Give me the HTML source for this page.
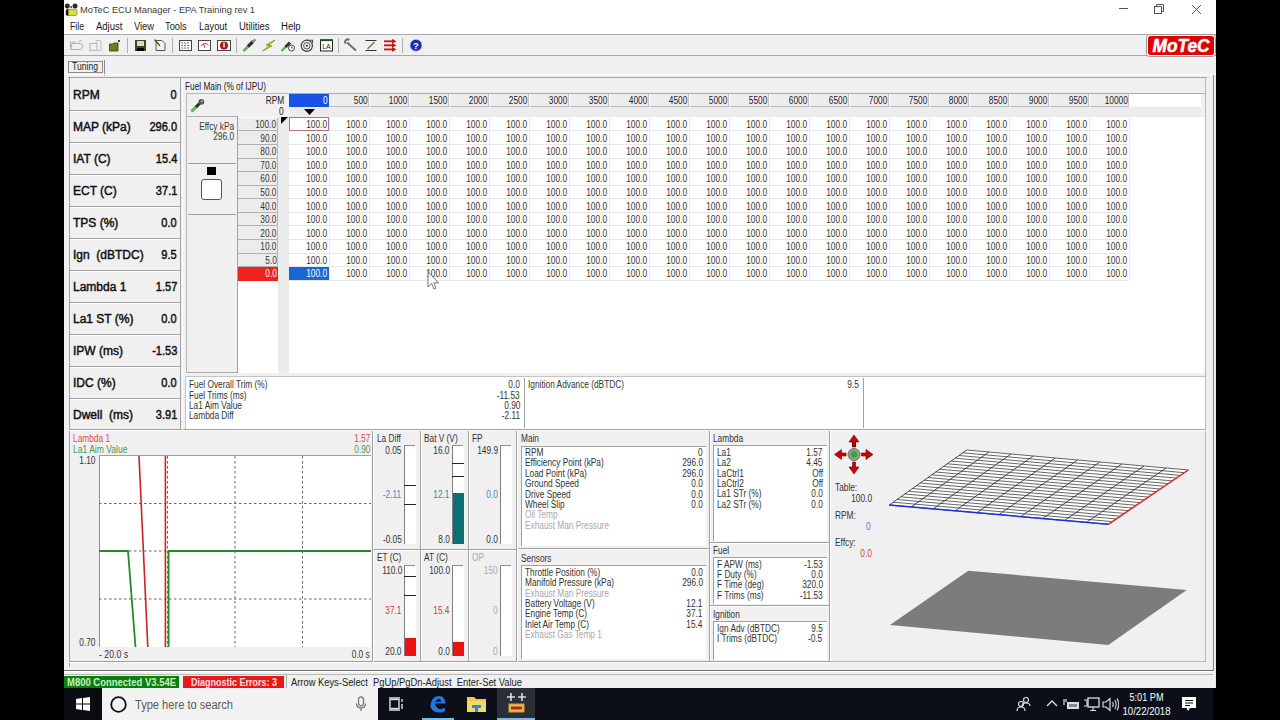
<!DOCTYPE html><html><head><meta charset="utf-8"><style>
html,body{margin:0;padding:0;}
body{width:1280px;height:720px;background:#000;position:relative;overflow:hidden;font-family:"Liberation Sans",sans-serif;}
body>div,body>svg{position:absolute;}
</style></head><body>
<div style="left:64px;top:0px;width:1152px;height:688px;background:#f0f0f0"></div>
<div style="left:64px;top:0px;width:1152px;height:34px;background:#fff"></div>
<div style="left:80.00px;top:3.25px;font-size:9.5px;line-height:13.299999999999999px;color:#3a3a3a;transform:scaleX(0.9758);transform-origin:left center;white-space:pre;">MoTeC ECU Manager - EPA Training rev 1</div>
<svg style="left:64px;top:2px" width="15" height="15" viewBox="64 2 15 15">
<circle cx="67.3" cy="6" r="2.5" fill="#2a2a2a"/><circle cx="75" cy="6" r="2.5" fill="#2a2a2a"/><circle cx="71.2" cy="7" r="0.9" fill="#333"/>
<rect x="66" y="9.3" width="11" height="6.2" rx="1.6" fill="#d8e040" stroke="#6a6a20" stroke-width="0.6"/><path d="M67.6 9.3H68.4V15.5H67.6A1.6 1.6 0 0 1 66 13.9V10.9A1.6 1.6 0 0 1 67.6 9.3Z" fill="#111"/></svg>
<div style="left:1119px;top:8px;width:9px;height:1px;background:#555"></div>
<svg style="left:1154px;top:4px" width="11" height="11" viewBox="0 0 11 11"><rect x="0.5" y="2.5" width="7" height="7" fill="none" stroke="#555"/><path d="M2.5 2.5V0.5H9.5V7.5H7.5" fill="none" stroke="#555"/></svg>
<svg style="left:1191px;top:4px" width="11" height="11" viewBox="0 0 11 11"><path d="M1 1L10 10M10 1L1 10" stroke="#555" stroke-width="1"/></svg>
<div style="left:70.00px;top:20.20px;font-size:10px;line-height:14.0px;color:#1a1a1a;transform:scaleX(0.8689);transform-origin:left center;white-space:pre;">File</div>
<div style="left:95.60px;top:20.20px;font-size:10px;line-height:14.0px;color:#1a1a1a;transform:scaleX(0.9499);transform-origin:left center;white-space:pre;">Adjust</div>
<div style="left:133.60px;top:20.20px;font-size:10px;line-height:14.0px;color:#1a1a1a;transform:scaleX(0.9305);transform-origin:left center;white-space:pre;">View</div>
<div style="left:165.30px;top:20.20px;font-size:10px;line-height:14.0px;color:#1a1a1a;transform:scaleX(0.9296);transform-origin:left center;white-space:pre;">Tools</div>
<div style="left:198.80px;top:20.20px;font-size:10px;line-height:14.0px;color:#1a1a1a;transform:scaleX(0.9393);transform-origin:left center;white-space:pre;">Layout</div>
<div style="left:238.50px;top:20.20px;font-size:10px;line-height:14.0px;color:#1a1a1a;transform:scaleX(0.9464);transform-origin:left center;white-space:pre;">Utilities</div>
<div style="left:281.00px;top:20.20px;font-size:10px;line-height:14.0px;color:#1a1a1a;transform:scaleX(0.9579);transform-origin:left center;white-space:pre;">Help</div>
<div style="left:64px;top:34px;width:1152px;height:1px;background:#a8a8a8"></div>
<div style="left:64px;top:55px;width:1152px;height:1px;background:#a8a8a8"></div>
<div style="left:64px;top:56px;width:1152px;height:632px;background:#f0f0f0"></div>
<div style="left:68px;top:61px;width:35px;height:12px;border:1px solid #8a8a8a;background:#f0f0f0;box-sizing:border-box"></div>
<div style="left:72.40px;top:60.00px;font-size:10px;line-height:14.0px;color:#222;transform:scaleX(0.8608);transform-origin:left center;white-space:pre;">Tuning</div>
<div style="left:104px;top:60px;width:1px;height:16px;background:#8a8a8a"></div>
<div style="left:64px;top:74px;width:1152px;height:1px;background:#ffffff"></div>
<div style="left:68px;top:77px;width:1139px;height:1px;background:#a0a0a0"></div>
<div style="left:1213px;top:75px;width:1px;height:596px;background:#8a8a8a"></div>
<div style="left:1215px;top:75px;width:1px;height:613px;background:#e8e8e8"></div>
<div style="left:1205px;top:77px;width:1px;height:353px;background:#b8b8b8"></div>
<div style="left:69px;top:78px;width:1px;height:352px;background:#a0a0a0"></div>
<div style="left:180px;top:78px;width:1px;height:352px;background:#a0a0a0"></div>
<div style="left:73.00px;top:87.10px;font-size:12px;line-height:16.799999999999997px;color:#111;white-space:pre;-webkit-text-stroke:0.45px #111">RPM</div>
<div style="left:170.33px;top:87.10px;font-size:12px;line-height:16.799999999999997px;color:#111;transform:scaleX(0.9200);transform-origin:right center;white-space:pre;-webkit-text-stroke:0.45px #111">0</div>
<div style="left:70px;top:110px;width:110px;height:1px;background:#a0a0a0"></div>
<div style="left:70px;top:111px;width:110px;height:1px;background:#ffffff"></div>
<div style="left:73.00px;top:119.10px;font-size:12px;line-height:16.799999999999997px;color:#111;white-space:pre;-webkit-text-stroke:0.45px #111">MAP (kPa)</div>
<div style="left:146.97px;top:119.10px;font-size:12px;line-height:16.799999999999997px;color:#111;transform:scaleX(0.9200);transform-origin:right center;white-space:pre;-webkit-text-stroke:0.45px #111">296.0</div>
<div style="left:70px;top:142px;width:110px;height:1px;background:#a0a0a0"></div>
<div style="left:70px;top:143px;width:110px;height:1px;background:#ffffff"></div>
<div style="left:73.00px;top:151.10px;font-size:12px;line-height:16.799999999999997px;color:#111;white-space:pre;-webkit-text-stroke:0.45px #111">IAT (C)</div>
<div style="left:153.65px;top:151.10px;font-size:12px;line-height:16.799999999999997px;color:#111;transform:scaleX(0.9200);transform-origin:right center;white-space:pre;-webkit-text-stroke:0.45px #111">15.4</div>
<div style="left:70px;top:174px;width:110px;height:1px;background:#a0a0a0"></div>
<div style="left:70px;top:175px;width:110px;height:1px;background:#ffffff"></div>
<div style="left:73.00px;top:183.10px;font-size:12px;line-height:16.799999999999997px;color:#111;white-space:pre;-webkit-text-stroke:0.45px #111">ECT (C)</div>
<div style="left:153.65px;top:183.10px;font-size:12px;line-height:16.799999999999997px;color:#111;transform:scaleX(0.9200);transform-origin:right center;white-space:pre;-webkit-text-stroke:0.45px #111">37.1</div>
<div style="left:70px;top:206px;width:110px;height:1px;background:#a0a0a0"></div>
<div style="left:70px;top:207px;width:110px;height:1px;background:#ffffff"></div>
<div style="left:73.00px;top:215.10px;font-size:12px;line-height:16.799999999999997px;color:#111;white-space:pre;-webkit-text-stroke:0.45px #111">TPS (%)</div>
<div style="left:160.32px;top:215.10px;font-size:12px;line-height:16.799999999999997px;color:#111;transform:scaleX(0.9200);transform-origin:right center;white-space:pre;-webkit-text-stroke:0.45px #111">0.0</div>
<div style="left:70px;top:238px;width:110px;height:1px;background:#a0a0a0"></div>
<div style="left:70px;top:239px;width:110px;height:1px;background:#ffffff"></div>
<div style="left:73.00px;top:247.10px;font-size:12px;line-height:16.799999999999997px;color:#111;white-space:pre;-webkit-text-stroke:0.45px #111">Ign  (dBTDC)</div>
<div style="left:160.32px;top:247.10px;font-size:12px;line-height:16.799999999999997px;color:#111;transform:scaleX(0.9200);transform-origin:right center;white-space:pre;-webkit-text-stroke:0.45px #111">9.5</div>
<div style="left:70px;top:270px;width:110px;height:1px;background:#a0a0a0"></div>
<div style="left:70px;top:271px;width:110px;height:1px;background:#ffffff"></div>
<div style="left:73.00px;top:279.10px;font-size:12px;line-height:16.799999999999997px;color:#111;white-space:pre;-webkit-text-stroke:0.45px #111">Lambda 1</div>
<div style="left:153.65px;top:279.10px;font-size:12px;line-height:16.799999999999997px;color:#111;transform:scaleX(0.9200);transform-origin:right center;white-space:pre;-webkit-text-stroke:0.45px #111">1.57</div>
<div style="left:70px;top:302px;width:110px;height:1px;background:#a0a0a0"></div>
<div style="left:70px;top:303px;width:110px;height:1px;background:#ffffff"></div>
<div style="left:73.00px;top:311.10px;font-size:12px;line-height:16.799999999999997px;color:#111;white-space:pre;-webkit-text-stroke:0.45px #111">La1 ST (%)</div>
<div style="left:160.32px;top:311.10px;font-size:12px;line-height:16.799999999999997px;color:#111;transform:scaleX(0.9200);transform-origin:right center;white-space:pre;-webkit-text-stroke:0.45px #111">0.0</div>
<div style="left:70px;top:334px;width:110px;height:1px;background:#a0a0a0"></div>
<div style="left:70px;top:335px;width:110px;height:1px;background:#ffffff"></div>
<div style="left:73.00px;top:343.10px;font-size:12px;line-height:16.799999999999997px;color:#111;white-space:pre;-webkit-text-stroke:0.45px #111">IPW (ms)</div>
<div style="left:149.65px;top:343.10px;font-size:12px;line-height:16.799999999999997px;color:#111;transform:scaleX(0.9200);transform-origin:right center;white-space:pre;-webkit-text-stroke:0.45px #111">-1.53</div>
<div style="left:70px;top:366px;width:110px;height:1px;background:#a0a0a0"></div>
<div style="left:70px;top:367px;width:110px;height:1px;background:#ffffff"></div>
<div style="left:73.00px;top:375.10px;font-size:12px;line-height:16.799999999999997px;color:#111;white-space:pre;-webkit-text-stroke:0.45px #111">IDC (%)</div>
<div style="left:160.32px;top:375.10px;font-size:12px;line-height:16.799999999999997px;color:#111;transform:scaleX(0.9200);transform-origin:right center;white-space:pre;-webkit-text-stroke:0.45px #111">0.0</div>
<div style="left:70px;top:398px;width:110px;height:1px;background:#a0a0a0"></div>
<div style="left:70px;top:399px;width:110px;height:1px;background:#ffffff"></div>
<div style="left:73.00px;top:407.10px;font-size:12px;line-height:16.799999999999997px;color:#111;white-space:pre;-webkit-text-stroke:0.45px #111">Dwell  (ms)</div>
<div style="left:153.65px;top:407.10px;font-size:12px;line-height:16.799999999999997px;color:#111;transform:scaleX(0.9200);transform-origin:right center;white-space:pre;-webkit-text-stroke:0.45px #111">3.91</div>
<div style="left:69px;top:429px;width:1136px;height:1px;background:#a0a0a0"></div>
<div style="left:69px;top:430px;width:1136px;height:1px;background:#ffffff"></div>
<div style="left:182px;top:78px;width:1px;height:352px;background:#ffffff"></div>
<div style="left:185.00px;top:80.00px;font-size:10px;line-height:14.0px;color:#222;transform:scaleX(0.8282);transform-origin:left center;white-space:pre;">Fuel Main (% of IJPU)</div>
<div style="left:186px;top:93px;width:1px;height:280px;background:#b8b8b8"></div>
<div style="left:186px;top:93px;width:1019px;height:1px;background:#b8b8b8"></div>
<div style="left:187px;top:94px;width:102px;height:23px;background:#f0f0f0"></div>
<div style="left:261.78px;top:94.00px;font-size:10px;line-height:14.0px;color:#222;transform:scaleX(0.8300);transform-origin:right center;white-space:pre;">RPM</div>
<div style="left:278.44px;top:105.00px;font-size:10px;line-height:14.0px;color:#222;transform:scaleX(0.8300);transform-origin:right center;white-space:pre;">0</div>
<svg style="left:190px;top:97px" width="16" height="16" viewBox="0 0 16 16"><path d="M2.5 13.5L6.5 9.5" stroke="#6ab86a" stroke-width="3.4" stroke-linecap="round"/><path d="M6 10L9.5 6.5" stroke="#2a2a2a" stroke-width="3"/><circle cx="11.3" cy="4.8" r="2.9" fill="#555"/><circle cx="11.8" cy="4.2" r="1.2" fill="#999"/></svg>
<div style="left:1129px;top:93px;width:72px;height:14px;background:#fff"></div>
<div style="left:289px;top:93px;width:40px;height:14px;background:#1a4fe8"></div>
<div style="left:321.94px;top:94.20px;font-size:10px;line-height:14.0px;color:#fff;transform:scaleX(0.8300);transform-origin:right center;white-space:pre;">0</div>
<div style="left:329px;top:93px;width:40px;height:14px;background:#ededed;border-right:1px solid #c4c4c4;border-bottom:1px solid #bcbcbc;border-left:1px solid #fafafa;box-sizing:border-box"></div>
<div style="left:350.82px;top:94.20px;font-size:10px;line-height:14.0px;color:#222;transform:scaleX(0.8300);transform-origin:right center;white-space:pre;">500</div>
<div style="left:369px;top:93px;width:40px;height:14px;background:#ededed;border-right:1px solid #c4c4c4;border-bottom:1px solid #bcbcbc;border-left:1px solid #fafafa;box-sizing:border-box"></div>
<div style="left:385.26px;top:94.20px;font-size:10px;line-height:14.0px;color:#222;transform:scaleX(0.8300);transform-origin:right center;white-space:pre;">1000</div>
<div style="left:409px;top:93px;width:40px;height:14px;background:#ededed;border-right:1px solid #c4c4c4;border-bottom:1px solid #bcbcbc;border-left:1px solid #fafafa;box-sizing:border-box"></div>
<div style="left:425.26px;top:94.20px;font-size:10px;line-height:14.0px;color:#222;transform:scaleX(0.8300);transform-origin:right center;white-space:pre;">1500</div>
<div style="left:449px;top:93px;width:40px;height:14px;background:#ededed;border-right:1px solid #c4c4c4;border-bottom:1px solid #bcbcbc;border-left:1px solid #fafafa;box-sizing:border-box"></div>
<div style="left:465.26px;top:94.20px;font-size:10px;line-height:14.0px;color:#222;transform:scaleX(0.8300);transform-origin:right center;white-space:pre;">2000</div>
<div style="left:489px;top:93px;width:40px;height:14px;background:#ededed;border-right:1px solid #c4c4c4;border-bottom:1px solid #bcbcbc;border-left:1px solid #fafafa;box-sizing:border-box"></div>
<div style="left:505.26px;top:94.20px;font-size:10px;line-height:14.0px;color:#222;transform:scaleX(0.8300);transform-origin:right center;white-space:pre;">2500</div>
<div style="left:529px;top:93px;width:40px;height:14px;background:#ededed;border-right:1px solid #c4c4c4;border-bottom:1px solid #bcbcbc;border-left:1px solid #fafafa;box-sizing:border-box"></div>
<div style="left:545.26px;top:94.20px;font-size:10px;line-height:14.0px;color:#222;transform:scaleX(0.8300);transform-origin:right center;white-space:pre;">3000</div>
<div style="left:569px;top:93px;width:40px;height:14px;background:#ededed;border-right:1px solid #c4c4c4;border-bottom:1px solid #bcbcbc;border-left:1px solid #fafafa;box-sizing:border-box"></div>
<div style="left:585.26px;top:94.20px;font-size:10px;line-height:14.0px;color:#222;transform:scaleX(0.8300);transform-origin:right center;white-space:pre;">3500</div>
<div style="left:609px;top:93px;width:40px;height:14px;background:#ededed;border-right:1px solid #c4c4c4;border-bottom:1px solid #bcbcbc;border-left:1px solid #fafafa;box-sizing:border-box"></div>
<div style="left:625.26px;top:94.20px;font-size:10px;line-height:14.0px;color:#222;transform:scaleX(0.8300);transform-origin:right center;white-space:pre;">4000</div>
<div style="left:649px;top:93px;width:40px;height:14px;background:#ededed;border-right:1px solid #c4c4c4;border-bottom:1px solid #bcbcbc;border-left:1px solid #fafafa;box-sizing:border-box"></div>
<div style="left:665.26px;top:94.20px;font-size:10px;line-height:14.0px;color:#222;transform:scaleX(0.8300);transform-origin:right center;white-space:pre;">4500</div>
<div style="left:689px;top:93px;width:40px;height:14px;background:#ededed;border-right:1px solid #c4c4c4;border-bottom:1px solid #bcbcbc;border-left:1px solid #fafafa;box-sizing:border-box"></div>
<div style="left:705.26px;top:94.20px;font-size:10px;line-height:14.0px;color:#222;transform:scaleX(0.8300);transform-origin:right center;white-space:pre;">5000</div>
<div style="left:729px;top:93px;width:40px;height:14px;background:#ededed;border-right:1px solid #c4c4c4;border-bottom:1px solid #bcbcbc;border-left:1px solid #fafafa;box-sizing:border-box"></div>
<div style="left:745.26px;top:94.20px;font-size:10px;line-height:14.0px;color:#222;transform:scaleX(0.8300);transform-origin:right center;white-space:pre;">5500</div>
<div style="left:769px;top:93px;width:40px;height:14px;background:#ededed;border-right:1px solid #c4c4c4;border-bottom:1px solid #bcbcbc;border-left:1px solid #fafafa;box-sizing:border-box"></div>
<div style="left:785.26px;top:94.20px;font-size:10px;line-height:14.0px;color:#222;transform:scaleX(0.8300);transform-origin:right center;white-space:pre;">6000</div>
<div style="left:809px;top:93px;width:40px;height:14px;background:#ededed;border-right:1px solid #c4c4c4;border-bottom:1px solid #bcbcbc;border-left:1px solid #fafafa;box-sizing:border-box"></div>
<div style="left:825.26px;top:94.20px;font-size:10px;line-height:14.0px;color:#222;transform:scaleX(0.8300);transform-origin:right center;white-space:pre;">6500</div>
<div style="left:849px;top:93px;width:40px;height:14px;background:#ededed;border-right:1px solid #c4c4c4;border-bottom:1px solid #bcbcbc;border-left:1px solid #fafafa;box-sizing:border-box"></div>
<div style="left:865.26px;top:94.20px;font-size:10px;line-height:14.0px;color:#222;transform:scaleX(0.8300);transform-origin:right center;white-space:pre;">7000</div>
<div style="left:889px;top:93px;width:40px;height:14px;background:#ededed;border-right:1px solid #c4c4c4;border-bottom:1px solid #bcbcbc;border-left:1px solid #fafafa;box-sizing:border-box"></div>
<div style="left:905.26px;top:94.20px;font-size:10px;line-height:14.0px;color:#222;transform:scaleX(0.8300);transform-origin:right center;white-space:pre;">7500</div>
<div style="left:929px;top:93px;width:40px;height:14px;background:#ededed;border-right:1px solid #c4c4c4;border-bottom:1px solid #bcbcbc;border-left:1px solid #fafafa;box-sizing:border-box"></div>
<div style="left:945.26px;top:94.20px;font-size:10px;line-height:14.0px;color:#222;transform:scaleX(0.8300);transform-origin:right center;white-space:pre;">8000</div>
<div style="left:969px;top:93px;width:40px;height:14px;background:#ededed;border-right:1px solid #c4c4c4;border-bottom:1px solid #bcbcbc;border-left:1px solid #fafafa;box-sizing:border-box"></div>
<div style="left:985.26px;top:94.20px;font-size:10px;line-height:14.0px;color:#222;transform:scaleX(0.8300);transform-origin:right center;white-space:pre;">8500</div>
<div style="left:1009px;top:93px;width:40px;height:14px;background:#ededed;border-right:1px solid #c4c4c4;border-bottom:1px solid #bcbcbc;border-left:1px solid #fafafa;box-sizing:border-box"></div>
<div style="left:1025.26px;top:94.20px;font-size:10px;line-height:14.0px;color:#222;transform:scaleX(0.8300);transform-origin:right center;white-space:pre;">9000</div>
<div style="left:1049px;top:93px;width:40px;height:14px;background:#ededed;border-right:1px solid #c4c4c4;border-bottom:1px solid #bcbcbc;border-left:1px solid #fafafa;box-sizing:border-box"></div>
<div style="left:1065.26px;top:94.20px;font-size:10px;line-height:14.0px;color:#222;transform:scaleX(0.8300);transform-origin:right center;white-space:pre;">9500</div>
<div style="left:1089px;top:93px;width:40px;height:14px;background:#ededed;border-right:1px solid #c4c4c4;border-bottom:1px solid #bcbcbc;border-left:1px solid #fafafa;box-sizing:border-box"></div>
<div style="left:1099.70px;top:94.20px;font-size:10px;line-height:14.0px;color:#222;transform:scaleX(0.8300);transform-origin:right center;white-space:pre;">10000</div>
<div style="left:289px;top:93px;width:912px;height:1px;background:#a8a8a8"></div>
<div style="left:289px;top:107px;width:912px;height:10px;background:#ececec"></div>
<svg style="left:304px;top:109px" width="11" height="6" viewBox="0 0 11 6"><path d="M0 0H11L5.5 6Z" fill="#000"/></svg>
<div style="left:187px;top:117px;width:51px;height:256px;background:#f0f0f0;border-bottom:1px solid #a8a8a8;box-sizing:border-box"></div>
<div style="left:237px;top:117px;width:1px;height:256px;background:#a0a0a0"></div>
<div style="left:191.95px;top:120.20px;font-size:10px;line-height:14.0px;color:#3a3a3a;transform:scaleX(0.8300);transform-origin:right center;white-space:pre;">Effcy kPa</div>
<div style="left:187px;top:116px;width:51px;height:1px;background:#b0b0b0"></div>
<div style="left:208.98px;top:130.00px;font-size:10px;line-height:14.0px;color:#3a3a3a;transform:scaleX(0.8300);transform-origin:right center;white-space:pre;">296.0</div>
<div style="left:188px;top:163px;width:48px;height:1px;background:#a0a0a0"></div>
<div style="left:188px;top:214px;width:48px;height:1px;background:#a0a0a0"></div>
<div style="left:207px;top:167px;width:9px;height:8px;background:#000"></div>
<div style="left:201px;top:179px;width:21px;height:21px;background:#fff;border:1px solid #555;border-radius:3px;box-sizing:border-box"></div>
<div style="left:238px;top:117px;width:40px;height:256px;background:#fff"></div>
<div style="left:238px;top:118px;width:40px;height:13px;background:#ececec;border-bottom:1px solid #b0b0b0;border-right:1px solid #b8b8b8;box-sizing:border-box"></div>
<div style="left:251.48px;top:118.09px;font-size:10px;line-height:14.0px;color:#333;transform:scaleX(0.8300);transform-origin:right center;white-space:pre;">100.0</div>
<div style="left:238px;top:131px;width:40px;height:14px;background:#ececec;border-bottom:1px solid #b0b0b0;border-right:1px solid #b8b8b8;box-sizing:border-box"></div>
<div style="left:257.04px;top:131.67px;font-size:10px;line-height:14.0px;color:#333;transform:scaleX(0.8300);transform-origin:right center;white-space:pre;">90.0</div>
<div style="left:238px;top:145px;width:40px;height:14px;background:#ececec;border-bottom:1px solid #b0b0b0;border-right:1px solid #b8b8b8;box-sizing:border-box"></div>
<div style="left:257.04px;top:145.25px;font-size:10px;line-height:14.0px;color:#333;transform:scaleX(0.8300);transform-origin:right center;white-space:pre;">80.0</div>
<div style="left:238px;top:159px;width:40px;height:13px;background:#ececec;border-bottom:1px solid #b0b0b0;border-right:1px solid #b8b8b8;box-sizing:border-box"></div>
<div style="left:257.04px;top:158.83px;font-size:10px;line-height:14.0px;color:#333;transform:scaleX(0.8300);transform-origin:right center;white-space:pre;">70.0</div>
<div style="left:238px;top:172px;width:40px;height:14px;background:#ececec;border-bottom:1px solid #b0b0b0;border-right:1px solid #b8b8b8;box-sizing:border-box"></div>
<div style="left:257.04px;top:172.41px;font-size:10px;line-height:14.0px;color:#333;transform:scaleX(0.8300);transform-origin:right center;white-space:pre;">60.0</div>
<div style="left:238px;top:186px;width:40px;height:13px;background:#ececec;border-bottom:1px solid #b0b0b0;border-right:1px solid #b8b8b8;box-sizing:border-box"></div>
<div style="left:257.04px;top:185.99px;font-size:10px;line-height:14.0px;color:#333;transform:scaleX(0.8300);transform-origin:right center;white-space:pre;">50.0</div>
<div style="left:238px;top:199px;width:40px;height:14px;background:#ececec;border-bottom:1px solid #b0b0b0;border-right:1px solid #b8b8b8;box-sizing:border-box"></div>
<div style="left:257.04px;top:199.57px;font-size:10px;line-height:14.0px;color:#333;transform:scaleX(0.8300);transform-origin:right center;white-space:pre;">40.0</div>
<div style="left:238px;top:213px;width:40px;height:13px;background:#ececec;border-bottom:1px solid #b0b0b0;border-right:1px solid #b8b8b8;box-sizing:border-box"></div>
<div style="left:257.04px;top:213.15px;font-size:10px;line-height:14.0px;color:#333;transform:scaleX(0.8300);transform-origin:right center;white-space:pre;">30.0</div>
<div style="left:238px;top:226px;width:40px;height:14px;background:#ececec;border-bottom:1px solid #b0b0b0;border-right:1px solid #b8b8b8;box-sizing:border-box"></div>
<div style="left:257.04px;top:226.73px;font-size:10px;line-height:14.0px;color:#333;transform:scaleX(0.8300);transform-origin:right center;white-space:pre;">20.0</div>
<div style="left:238px;top:240px;width:40px;height:14px;background:#ececec;border-bottom:1px solid #b0b0b0;border-right:1px solid #b8b8b8;box-sizing:border-box"></div>
<div style="left:257.04px;top:240.31px;font-size:10px;line-height:14.0px;color:#333;transform:scaleX(0.8300);transform-origin:right center;white-space:pre;">10.0</div>
<div style="left:238px;top:254px;width:40px;height:13px;background:#ececec;border-bottom:1px solid #b0b0b0;border-right:1px solid #b8b8b8;box-sizing:border-box"></div>
<div style="left:262.60px;top:253.89px;font-size:10px;line-height:14.0px;color:#333;transform:scaleX(0.8300);transform-origin:right center;white-space:pre;">5.0</div>
<div style="left:238px;top:267px;width:40px;height:14px;background:#f02222"></div>
<div style="left:262.60px;top:267.47px;font-size:10px;line-height:14.0px;color:#fff;transform:scaleX(0.8300);transform-origin:right center;white-space:pre;">0.0</div>
<div style="left:278px;top:117px;width:11px;height:255px;background:#ebebeb"></div>
<svg style="left:281px;top:117px" width="7" height="7" viewBox="0 0 7 7"><path d="M0 0H7L0 7Z" fill="#000"/></svg>
<div style="left:289px;top:117px;width:916px;height:256px;background:#fff"></div>
<div style="left:301.98px;top:118.09px;font-size:10px;line-height:14.0px;color:#333;transform:scaleX(0.8300);transform-origin:right center;white-space:pre;">100.0</div>
<div style="left:341.98px;top:118.09px;font-size:10px;line-height:14.0px;color:#333;transform:scaleX(0.8300);transform-origin:right center;white-space:pre;">100.0</div>
<div style="left:381.98px;top:118.09px;font-size:10px;line-height:14.0px;color:#333;transform:scaleX(0.8300);transform-origin:right center;white-space:pre;">100.0</div>
<div style="left:421.98px;top:118.09px;font-size:10px;line-height:14.0px;color:#333;transform:scaleX(0.8300);transform-origin:right center;white-space:pre;">100.0</div>
<div style="left:461.98px;top:118.09px;font-size:10px;line-height:14.0px;color:#333;transform:scaleX(0.8300);transform-origin:right center;white-space:pre;">100.0</div>
<div style="left:501.98px;top:118.09px;font-size:10px;line-height:14.0px;color:#333;transform:scaleX(0.8300);transform-origin:right center;white-space:pre;">100.0</div>
<div style="left:541.98px;top:118.09px;font-size:10px;line-height:14.0px;color:#333;transform:scaleX(0.8300);transform-origin:right center;white-space:pre;">100.0</div>
<div style="left:581.98px;top:118.09px;font-size:10px;line-height:14.0px;color:#333;transform:scaleX(0.8300);transform-origin:right center;white-space:pre;">100.0</div>
<div style="left:621.98px;top:118.09px;font-size:10px;line-height:14.0px;color:#333;transform:scaleX(0.8300);transform-origin:right center;white-space:pre;">100.0</div>
<div style="left:661.98px;top:118.09px;font-size:10px;line-height:14.0px;color:#333;transform:scaleX(0.8300);transform-origin:right center;white-space:pre;">100.0</div>
<div style="left:701.98px;top:118.09px;font-size:10px;line-height:14.0px;color:#333;transform:scaleX(0.8300);transform-origin:right center;white-space:pre;">100.0</div>
<div style="left:741.98px;top:118.09px;font-size:10px;line-height:14.0px;color:#333;transform:scaleX(0.8300);transform-origin:right center;white-space:pre;">100.0</div>
<div style="left:781.98px;top:118.09px;font-size:10px;line-height:14.0px;color:#333;transform:scaleX(0.8300);transform-origin:right center;white-space:pre;">100.0</div>
<div style="left:821.98px;top:118.09px;font-size:10px;line-height:14.0px;color:#333;transform:scaleX(0.8300);transform-origin:right center;white-space:pre;">100.0</div>
<div style="left:861.98px;top:118.09px;font-size:10px;line-height:14.0px;color:#333;transform:scaleX(0.8300);transform-origin:right center;white-space:pre;">100.0</div>
<div style="left:901.98px;top:118.09px;font-size:10px;line-height:14.0px;color:#333;transform:scaleX(0.8300);transform-origin:right center;white-space:pre;">100.0</div>
<div style="left:941.98px;top:118.09px;font-size:10px;line-height:14.0px;color:#333;transform:scaleX(0.8300);transform-origin:right center;white-space:pre;">100.0</div>
<div style="left:981.98px;top:118.09px;font-size:10px;line-height:14.0px;color:#333;transform:scaleX(0.8300);transform-origin:right center;white-space:pre;">100.0</div>
<div style="left:1021.98px;top:118.09px;font-size:10px;line-height:14.0px;color:#333;transform:scaleX(0.8300);transform-origin:right center;white-space:pre;">100.0</div>
<div style="left:1061.98px;top:118.09px;font-size:10px;line-height:14.0px;color:#333;transform:scaleX(0.8300);transform-origin:right center;white-space:pre;">100.0</div>
<div style="left:1101.98px;top:118.09px;font-size:10px;line-height:14.0px;color:#333;transform:scaleX(0.8300);transform-origin:right center;white-space:pre;">100.0</div>
<div style="left:301.98px;top:131.67px;font-size:10px;line-height:14.0px;color:#333;transform:scaleX(0.8300);transform-origin:right center;white-space:pre;">100.0</div>
<div style="left:341.98px;top:131.67px;font-size:10px;line-height:14.0px;color:#333;transform:scaleX(0.8300);transform-origin:right center;white-space:pre;">100.0</div>
<div style="left:381.98px;top:131.67px;font-size:10px;line-height:14.0px;color:#333;transform:scaleX(0.8300);transform-origin:right center;white-space:pre;">100.0</div>
<div style="left:421.98px;top:131.67px;font-size:10px;line-height:14.0px;color:#333;transform:scaleX(0.8300);transform-origin:right center;white-space:pre;">100.0</div>
<div style="left:461.98px;top:131.67px;font-size:10px;line-height:14.0px;color:#333;transform:scaleX(0.8300);transform-origin:right center;white-space:pre;">100.0</div>
<div style="left:501.98px;top:131.67px;font-size:10px;line-height:14.0px;color:#333;transform:scaleX(0.8300);transform-origin:right center;white-space:pre;">100.0</div>
<div style="left:541.98px;top:131.67px;font-size:10px;line-height:14.0px;color:#333;transform:scaleX(0.8300);transform-origin:right center;white-space:pre;">100.0</div>
<div style="left:581.98px;top:131.67px;font-size:10px;line-height:14.0px;color:#333;transform:scaleX(0.8300);transform-origin:right center;white-space:pre;">100.0</div>
<div style="left:621.98px;top:131.67px;font-size:10px;line-height:14.0px;color:#333;transform:scaleX(0.8300);transform-origin:right center;white-space:pre;">100.0</div>
<div style="left:661.98px;top:131.67px;font-size:10px;line-height:14.0px;color:#333;transform:scaleX(0.8300);transform-origin:right center;white-space:pre;">100.0</div>
<div style="left:701.98px;top:131.67px;font-size:10px;line-height:14.0px;color:#333;transform:scaleX(0.8300);transform-origin:right center;white-space:pre;">100.0</div>
<div style="left:741.98px;top:131.67px;font-size:10px;line-height:14.0px;color:#333;transform:scaleX(0.8300);transform-origin:right center;white-space:pre;">100.0</div>
<div style="left:781.98px;top:131.67px;font-size:10px;line-height:14.0px;color:#333;transform:scaleX(0.8300);transform-origin:right center;white-space:pre;">100.0</div>
<div style="left:821.98px;top:131.67px;font-size:10px;line-height:14.0px;color:#333;transform:scaleX(0.8300);transform-origin:right center;white-space:pre;">100.0</div>
<div style="left:861.98px;top:131.67px;font-size:10px;line-height:14.0px;color:#333;transform:scaleX(0.8300);transform-origin:right center;white-space:pre;">100.0</div>
<div style="left:901.98px;top:131.67px;font-size:10px;line-height:14.0px;color:#333;transform:scaleX(0.8300);transform-origin:right center;white-space:pre;">100.0</div>
<div style="left:941.98px;top:131.67px;font-size:10px;line-height:14.0px;color:#333;transform:scaleX(0.8300);transform-origin:right center;white-space:pre;">100.0</div>
<div style="left:981.98px;top:131.67px;font-size:10px;line-height:14.0px;color:#333;transform:scaleX(0.8300);transform-origin:right center;white-space:pre;">100.0</div>
<div style="left:1021.98px;top:131.67px;font-size:10px;line-height:14.0px;color:#333;transform:scaleX(0.8300);transform-origin:right center;white-space:pre;">100.0</div>
<div style="left:1061.98px;top:131.67px;font-size:10px;line-height:14.0px;color:#333;transform:scaleX(0.8300);transform-origin:right center;white-space:pre;">100.0</div>
<div style="left:1101.98px;top:131.67px;font-size:10px;line-height:14.0px;color:#333;transform:scaleX(0.8300);transform-origin:right center;white-space:pre;">100.0</div>
<div style="left:301.98px;top:145.25px;font-size:10px;line-height:14.0px;color:#333;transform:scaleX(0.8300);transform-origin:right center;white-space:pre;">100.0</div>
<div style="left:341.98px;top:145.25px;font-size:10px;line-height:14.0px;color:#333;transform:scaleX(0.8300);transform-origin:right center;white-space:pre;">100.0</div>
<div style="left:381.98px;top:145.25px;font-size:10px;line-height:14.0px;color:#333;transform:scaleX(0.8300);transform-origin:right center;white-space:pre;">100.0</div>
<div style="left:421.98px;top:145.25px;font-size:10px;line-height:14.0px;color:#333;transform:scaleX(0.8300);transform-origin:right center;white-space:pre;">100.0</div>
<div style="left:461.98px;top:145.25px;font-size:10px;line-height:14.0px;color:#333;transform:scaleX(0.8300);transform-origin:right center;white-space:pre;">100.0</div>
<div style="left:501.98px;top:145.25px;font-size:10px;line-height:14.0px;color:#333;transform:scaleX(0.8300);transform-origin:right center;white-space:pre;">100.0</div>
<div style="left:541.98px;top:145.25px;font-size:10px;line-height:14.0px;color:#333;transform:scaleX(0.8300);transform-origin:right center;white-space:pre;">100.0</div>
<div style="left:581.98px;top:145.25px;font-size:10px;line-height:14.0px;color:#333;transform:scaleX(0.8300);transform-origin:right center;white-space:pre;">100.0</div>
<div style="left:621.98px;top:145.25px;font-size:10px;line-height:14.0px;color:#333;transform:scaleX(0.8300);transform-origin:right center;white-space:pre;">100.0</div>
<div style="left:661.98px;top:145.25px;font-size:10px;line-height:14.0px;color:#333;transform:scaleX(0.8300);transform-origin:right center;white-space:pre;">100.0</div>
<div style="left:701.98px;top:145.25px;font-size:10px;line-height:14.0px;color:#333;transform:scaleX(0.8300);transform-origin:right center;white-space:pre;">100.0</div>
<div style="left:741.98px;top:145.25px;font-size:10px;line-height:14.0px;color:#333;transform:scaleX(0.8300);transform-origin:right center;white-space:pre;">100.0</div>
<div style="left:781.98px;top:145.25px;font-size:10px;line-height:14.0px;color:#333;transform:scaleX(0.8300);transform-origin:right center;white-space:pre;">100.0</div>
<div style="left:821.98px;top:145.25px;font-size:10px;line-height:14.0px;color:#333;transform:scaleX(0.8300);transform-origin:right center;white-space:pre;">100.0</div>
<div style="left:861.98px;top:145.25px;font-size:10px;line-height:14.0px;color:#333;transform:scaleX(0.8300);transform-origin:right center;white-space:pre;">100.0</div>
<div style="left:901.98px;top:145.25px;font-size:10px;line-height:14.0px;color:#333;transform:scaleX(0.8300);transform-origin:right center;white-space:pre;">100.0</div>
<div style="left:941.98px;top:145.25px;font-size:10px;line-height:14.0px;color:#333;transform:scaleX(0.8300);transform-origin:right center;white-space:pre;">100.0</div>
<div style="left:981.98px;top:145.25px;font-size:10px;line-height:14.0px;color:#333;transform:scaleX(0.8300);transform-origin:right center;white-space:pre;">100.0</div>
<div style="left:1021.98px;top:145.25px;font-size:10px;line-height:14.0px;color:#333;transform:scaleX(0.8300);transform-origin:right center;white-space:pre;">100.0</div>
<div style="left:1061.98px;top:145.25px;font-size:10px;line-height:14.0px;color:#333;transform:scaleX(0.8300);transform-origin:right center;white-space:pre;">100.0</div>
<div style="left:1101.98px;top:145.25px;font-size:10px;line-height:14.0px;color:#333;transform:scaleX(0.8300);transform-origin:right center;white-space:pre;">100.0</div>
<div style="left:301.98px;top:158.83px;font-size:10px;line-height:14.0px;color:#333;transform:scaleX(0.8300);transform-origin:right center;white-space:pre;">100.0</div>
<div style="left:341.98px;top:158.83px;font-size:10px;line-height:14.0px;color:#333;transform:scaleX(0.8300);transform-origin:right center;white-space:pre;">100.0</div>
<div style="left:381.98px;top:158.83px;font-size:10px;line-height:14.0px;color:#333;transform:scaleX(0.8300);transform-origin:right center;white-space:pre;">100.0</div>
<div style="left:421.98px;top:158.83px;font-size:10px;line-height:14.0px;color:#333;transform:scaleX(0.8300);transform-origin:right center;white-space:pre;">100.0</div>
<div style="left:461.98px;top:158.83px;font-size:10px;line-height:14.0px;color:#333;transform:scaleX(0.8300);transform-origin:right center;white-space:pre;">100.0</div>
<div style="left:501.98px;top:158.83px;font-size:10px;line-height:14.0px;color:#333;transform:scaleX(0.8300);transform-origin:right center;white-space:pre;">100.0</div>
<div style="left:541.98px;top:158.83px;font-size:10px;line-height:14.0px;color:#333;transform:scaleX(0.8300);transform-origin:right center;white-space:pre;">100.0</div>
<div style="left:581.98px;top:158.83px;font-size:10px;line-height:14.0px;color:#333;transform:scaleX(0.8300);transform-origin:right center;white-space:pre;">100.0</div>
<div style="left:621.98px;top:158.83px;font-size:10px;line-height:14.0px;color:#333;transform:scaleX(0.8300);transform-origin:right center;white-space:pre;">100.0</div>
<div style="left:661.98px;top:158.83px;font-size:10px;line-height:14.0px;color:#333;transform:scaleX(0.8300);transform-origin:right center;white-space:pre;">100.0</div>
<div style="left:701.98px;top:158.83px;font-size:10px;line-height:14.0px;color:#333;transform:scaleX(0.8300);transform-origin:right center;white-space:pre;">100.0</div>
<div style="left:741.98px;top:158.83px;font-size:10px;line-height:14.0px;color:#333;transform:scaleX(0.8300);transform-origin:right center;white-space:pre;">100.0</div>
<div style="left:781.98px;top:158.83px;font-size:10px;line-height:14.0px;color:#333;transform:scaleX(0.8300);transform-origin:right center;white-space:pre;">100.0</div>
<div style="left:821.98px;top:158.83px;font-size:10px;line-height:14.0px;color:#333;transform:scaleX(0.8300);transform-origin:right center;white-space:pre;">100.0</div>
<div style="left:861.98px;top:158.83px;font-size:10px;line-height:14.0px;color:#333;transform:scaleX(0.8300);transform-origin:right center;white-space:pre;">100.0</div>
<div style="left:901.98px;top:158.83px;font-size:10px;line-height:14.0px;color:#333;transform:scaleX(0.8300);transform-origin:right center;white-space:pre;">100.0</div>
<div style="left:941.98px;top:158.83px;font-size:10px;line-height:14.0px;color:#333;transform:scaleX(0.8300);transform-origin:right center;white-space:pre;">100.0</div>
<div style="left:981.98px;top:158.83px;font-size:10px;line-height:14.0px;color:#333;transform:scaleX(0.8300);transform-origin:right center;white-space:pre;">100.0</div>
<div style="left:1021.98px;top:158.83px;font-size:10px;line-height:14.0px;color:#333;transform:scaleX(0.8300);transform-origin:right center;white-space:pre;">100.0</div>
<div style="left:1061.98px;top:158.83px;font-size:10px;line-height:14.0px;color:#333;transform:scaleX(0.8300);transform-origin:right center;white-space:pre;">100.0</div>
<div style="left:1101.98px;top:158.83px;font-size:10px;line-height:14.0px;color:#333;transform:scaleX(0.8300);transform-origin:right center;white-space:pre;">100.0</div>
<div style="left:301.98px;top:172.41px;font-size:10px;line-height:14.0px;color:#333;transform:scaleX(0.8300);transform-origin:right center;white-space:pre;">100.0</div>
<div style="left:341.98px;top:172.41px;font-size:10px;line-height:14.0px;color:#333;transform:scaleX(0.8300);transform-origin:right center;white-space:pre;">100.0</div>
<div style="left:381.98px;top:172.41px;font-size:10px;line-height:14.0px;color:#333;transform:scaleX(0.8300);transform-origin:right center;white-space:pre;">100.0</div>
<div style="left:421.98px;top:172.41px;font-size:10px;line-height:14.0px;color:#333;transform:scaleX(0.8300);transform-origin:right center;white-space:pre;">100.0</div>
<div style="left:461.98px;top:172.41px;font-size:10px;line-height:14.0px;color:#333;transform:scaleX(0.8300);transform-origin:right center;white-space:pre;">100.0</div>
<div style="left:501.98px;top:172.41px;font-size:10px;line-height:14.0px;color:#333;transform:scaleX(0.8300);transform-origin:right center;white-space:pre;">100.0</div>
<div style="left:541.98px;top:172.41px;font-size:10px;line-height:14.0px;color:#333;transform:scaleX(0.8300);transform-origin:right center;white-space:pre;">100.0</div>
<div style="left:581.98px;top:172.41px;font-size:10px;line-height:14.0px;color:#333;transform:scaleX(0.8300);transform-origin:right center;white-space:pre;">100.0</div>
<div style="left:621.98px;top:172.41px;font-size:10px;line-height:14.0px;color:#333;transform:scaleX(0.8300);transform-origin:right center;white-space:pre;">100.0</div>
<div style="left:661.98px;top:172.41px;font-size:10px;line-height:14.0px;color:#333;transform:scaleX(0.8300);transform-origin:right center;white-space:pre;">100.0</div>
<div style="left:701.98px;top:172.41px;font-size:10px;line-height:14.0px;color:#333;transform:scaleX(0.8300);transform-origin:right center;white-space:pre;">100.0</div>
<div style="left:741.98px;top:172.41px;font-size:10px;line-height:14.0px;color:#333;transform:scaleX(0.8300);transform-origin:right center;white-space:pre;">100.0</div>
<div style="left:781.98px;top:172.41px;font-size:10px;line-height:14.0px;color:#333;transform:scaleX(0.8300);transform-origin:right center;white-space:pre;">100.0</div>
<div style="left:821.98px;top:172.41px;font-size:10px;line-height:14.0px;color:#333;transform:scaleX(0.8300);transform-origin:right center;white-space:pre;">100.0</div>
<div style="left:861.98px;top:172.41px;font-size:10px;line-height:14.0px;color:#333;transform:scaleX(0.8300);transform-origin:right center;white-space:pre;">100.0</div>
<div style="left:901.98px;top:172.41px;font-size:10px;line-height:14.0px;color:#333;transform:scaleX(0.8300);transform-origin:right center;white-space:pre;">100.0</div>
<div style="left:941.98px;top:172.41px;font-size:10px;line-height:14.0px;color:#333;transform:scaleX(0.8300);transform-origin:right center;white-space:pre;">100.0</div>
<div style="left:981.98px;top:172.41px;font-size:10px;line-height:14.0px;color:#333;transform:scaleX(0.8300);transform-origin:right center;white-space:pre;">100.0</div>
<div style="left:1021.98px;top:172.41px;font-size:10px;line-height:14.0px;color:#333;transform:scaleX(0.8300);transform-origin:right center;white-space:pre;">100.0</div>
<div style="left:1061.98px;top:172.41px;font-size:10px;line-height:14.0px;color:#333;transform:scaleX(0.8300);transform-origin:right center;white-space:pre;">100.0</div>
<div style="left:1101.98px;top:172.41px;font-size:10px;line-height:14.0px;color:#333;transform:scaleX(0.8300);transform-origin:right center;white-space:pre;">100.0</div>
<div style="left:301.98px;top:185.99px;font-size:10px;line-height:14.0px;color:#333;transform:scaleX(0.8300);transform-origin:right center;white-space:pre;">100.0</div>
<div style="left:341.98px;top:185.99px;font-size:10px;line-height:14.0px;color:#333;transform:scaleX(0.8300);transform-origin:right center;white-space:pre;">100.0</div>
<div style="left:381.98px;top:185.99px;font-size:10px;line-height:14.0px;color:#333;transform:scaleX(0.8300);transform-origin:right center;white-space:pre;">100.0</div>
<div style="left:421.98px;top:185.99px;font-size:10px;line-height:14.0px;color:#333;transform:scaleX(0.8300);transform-origin:right center;white-space:pre;">100.0</div>
<div style="left:461.98px;top:185.99px;font-size:10px;line-height:14.0px;color:#333;transform:scaleX(0.8300);transform-origin:right center;white-space:pre;">100.0</div>
<div style="left:501.98px;top:185.99px;font-size:10px;line-height:14.0px;color:#333;transform:scaleX(0.8300);transform-origin:right center;white-space:pre;">100.0</div>
<div style="left:541.98px;top:185.99px;font-size:10px;line-height:14.0px;color:#333;transform:scaleX(0.8300);transform-origin:right center;white-space:pre;">100.0</div>
<div style="left:581.98px;top:185.99px;font-size:10px;line-height:14.0px;color:#333;transform:scaleX(0.8300);transform-origin:right center;white-space:pre;">100.0</div>
<div style="left:621.98px;top:185.99px;font-size:10px;line-height:14.0px;color:#333;transform:scaleX(0.8300);transform-origin:right center;white-space:pre;">100.0</div>
<div style="left:661.98px;top:185.99px;font-size:10px;line-height:14.0px;color:#333;transform:scaleX(0.8300);transform-origin:right center;white-space:pre;">100.0</div>
<div style="left:701.98px;top:185.99px;font-size:10px;line-height:14.0px;color:#333;transform:scaleX(0.8300);transform-origin:right center;white-space:pre;">100.0</div>
<div style="left:741.98px;top:185.99px;font-size:10px;line-height:14.0px;color:#333;transform:scaleX(0.8300);transform-origin:right center;white-space:pre;">100.0</div>
<div style="left:781.98px;top:185.99px;font-size:10px;line-height:14.0px;color:#333;transform:scaleX(0.8300);transform-origin:right center;white-space:pre;">100.0</div>
<div style="left:821.98px;top:185.99px;font-size:10px;line-height:14.0px;color:#333;transform:scaleX(0.8300);transform-origin:right center;white-space:pre;">100.0</div>
<div style="left:861.98px;top:185.99px;font-size:10px;line-height:14.0px;color:#333;transform:scaleX(0.8300);transform-origin:right center;white-space:pre;">100.0</div>
<div style="left:901.98px;top:185.99px;font-size:10px;line-height:14.0px;color:#333;transform:scaleX(0.8300);transform-origin:right center;white-space:pre;">100.0</div>
<div style="left:941.98px;top:185.99px;font-size:10px;line-height:14.0px;color:#333;transform:scaleX(0.8300);transform-origin:right center;white-space:pre;">100.0</div>
<div style="left:981.98px;top:185.99px;font-size:10px;line-height:14.0px;color:#333;transform:scaleX(0.8300);transform-origin:right center;white-space:pre;">100.0</div>
<div style="left:1021.98px;top:185.99px;font-size:10px;line-height:14.0px;color:#333;transform:scaleX(0.8300);transform-origin:right center;white-space:pre;">100.0</div>
<div style="left:1061.98px;top:185.99px;font-size:10px;line-height:14.0px;color:#333;transform:scaleX(0.8300);transform-origin:right center;white-space:pre;">100.0</div>
<div style="left:1101.98px;top:185.99px;font-size:10px;line-height:14.0px;color:#333;transform:scaleX(0.8300);transform-origin:right center;white-space:pre;">100.0</div>
<div style="left:301.98px;top:199.57px;font-size:10px;line-height:14.0px;color:#333;transform:scaleX(0.8300);transform-origin:right center;white-space:pre;">100.0</div>
<div style="left:341.98px;top:199.57px;font-size:10px;line-height:14.0px;color:#333;transform:scaleX(0.8300);transform-origin:right center;white-space:pre;">100.0</div>
<div style="left:381.98px;top:199.57px;font-size:10px;line-height:14.0px;color:#333;transform:scaleX(0.8300);transform-origin:right center;white-space:pre;">100.0</div>
<div style="left:421.98px;top:199.57px;font-size:10px;line-height:14.0px;color:#333;transform:scaleX(0.8300);transform-origin:right center;white-space:pre;">100.0</div>
<div style="left:461.98px;top:199.57px;font-size:10px;line-height:14.0px;color:#333;transform:scaleX(0.8300);transform-origin:right center;white-space:pre;">100.0</div>
<div style="left:501.98px;top:199.57px;font-size:10px;line-height:14.0px;color:#333;transform:scaleX(0.8300);transform-origin:right center;white-space:pre;">100.0</div>
<div style="left:541.98px;top:199.57px;font-size:10px;line-height:14.0px;color:#333;transform:scaleX(0.8300);transform-origin:right center;white-space:pre;">100.0</div>
<div style="left:581.98px;top:199.57px;font-size:10px;line-height:14.0px;color:#333;transform:scaleX(0.8300);transform-origin:right center;white-space:pre;">100.0</div>
<div style="left:621.98px;top:199.57px;font-size:10px;line-height:14.0px;color:#333;transform:scaleX(0.8300);transform-origin:right center;white-space:pre;">100.0</div>
<div style="left:661.98px;top:199.57px;font-size:10px;line-height:14.0px;color:#333;transform:scaleX(0.8300);transform-origin:right center;white-space:pre;">100.0</div>
<div style="left:701.98px;top:199.57px;font-size:10px;line-height:14.0px;color:#333;transform:scaleX(0.8300);transform-origin:right center;white-space:pre;">100.0</div>
<div style="left:741.98px;top:199.57px;font-size:10px;line-height:14.0px;color:#333;transform:scaleX(0.8300);transform-origin:right center;white-space:pre;">100.0</div>
<div style="left:781.98px;top:199.57px;font-size:10px;line-height:14.0px;color:#333;transform:scaleX(0.8300);transform-origin:right center;white-space:pre;">100.0</div>
<div style="left:821.98px;top:199.57px;font-size:10px;line-height:14.0px;color:#333;transform:scaleX(0.8300);transform-origin:right center;white-space:pre;">100.0</div>
<div style="left:861.98px;top:199.57px;font-size:10px;line-height:14.0px;color:#333;transform:scaleX(0.8300);transform-origin:right center;white-space:pre;">100.0</div>
<div style="left:901.98px;top:199.57px;font-size:10px;line-height:14.0px;color:#333;transform:scaleX(0.8300);transform-origin:right center;white-space:pre;">100.0</div>
<div style="left:941.98px;top:199.57px;font-size:10px;line-height:14.0px;color:#333;transform:scaleX(0.8300);transform-origin:right center;white-space:pre;">100.0</div>
<div style="left:981.98px;top:199.57px;font-size:10px;line-height:14.0px;color:#333;transform:scaleX(0.8300);transform-origin:right center;white-space:pre;">100.0</div>
<div style="left:1021.98px;top:199.57px;font-size:10px;line-height:14.0px;color:#333;transform:scaleX(0.8300);transform-origin:right center;white-space:pre;">100.0</div>
<div style="left:1061.98px;top:199.57px;font-size:10px;line-height:14.0px;color:#333;transform:scaleX(0.8300);transform-origin:right center;white-space:pre;">100.0</div>
<div style="left:1101.98px;top:199.57px;font-size:10px;line-height:14.0px;color:#333;transform:scaleX(0.8300);transform-origin:right center;white-space:pre;">100.0</div>
<div style="left:301.98px;top:213.15px;font-size:10px;line-height:14.0px;color:#333;transform:scaleX(0.8300);transform-origin:right center;white-space:pre;">100.0</div>
<div style="left:341.98px;top:213.15px;font-size:10px;line-height:14.0px;color:#333;transform:scaleX(0.8300);transform-origin:right center;white-space:pre;">100.0</div>
<div style="left:381.98px;top:213.15px;font-size:10px;line-height:14.0px;color:#333;transform:scaleX(0.8300);transform-origin:right center;white-space:pre;">100.0</div>
<div style="left:421.98px;top:213.15px;font-size:10px;line-height:14.0px;color:#333;transform:scaleX(0.8300);transform-origin:right center;white-space:pre;">100.0</div>
<div style="left:461.98px;top:213.15px;font-size:10px;line-height:14.0px;color:#333;transform:scaleX(0.8300);transform-origin:right center;white-space:pre;">100.0</div>
<div style="left:501.98px;top:213.15px;font-size:10px;line-height:14.0px;color:#333;transform:scaleX(0.8300);transform-origin:right center;white-space:pre;">100.0</div>
<div style="left:541.98px;top:213.15px;font-size:10px;line-height:14.0px;color:#333;transform:scaleX(0.8300);transform-origin:right center;white-space:pre;">100.0</div>
<div style="left:581.98px;top:213.15px;font-size:10px;line-height:14.0px;color:#333;transform:scaleX(0.8300);transform-origin:right center;white-space:pre;">100.0</div>
<div style="left:621.98px;top:213.15px;font-size:10px;line-height:14.0px;color:#333;transform:scaleX(0.8300);transform-origin:right center;white-space:pre;">100.0</div>
<div style="left:661.98px;top:213.15px;font-size:10px;line-height:14.0px;color:#333;transform:scaleX(0.8300);transform-origin:right center;white-space:pre;">100.0</div>
<div style="left:701.98px;top:213.15px;font-size:10px;line-height:14.0px;color:#333;transform:scaleX(0.8300);transform-origin:right center;white-space:pre;">100.0</div>
<div style="left:741.98px;top:213.15px;font-size:10px;line-height:14.0px;color:#333;transform:scaleX(0.8300);transform-origin:right center;white-space:pre;">100.0</div>
<div style="left:781.98px;top:213.15px;font-size:10px;line-height:14.0px;color:#333;transform:scaleX(0.8300);transform-origin:right center;white-space:pre;">100.0</div>
<div style="left:821.98px;top:213.15px;font-size:10px;line-height:14.0px;color:#333;transform:scaleX(0.8300);transform-origin:right center;white-space:pre;">100.0</div>
<div style="left:861.98px;top:213.15px;font-size:10px;line-height:14.0px;color:#333;transform:scaleX(0.8300);transform-origin:right center;white-space:pre;">100.0</div>
<div style="left:901.98px;top:213.15px;font-size:10px;line-height:14.0px;color:#333;transform:scaleX(0.8300);transform-origin:right center;white-space:pre;">100.0</div>
<div style="left:941.98px;top:213.15px;font-size:10px;line-height:14.0px;color:#333;transform:scaleX(0.8300);transform-origin:right center;white-space:pre;">100.0</div>
<div style="left:981.98px;top:213.15px;font-size:10px;line-height:14.0px;color:#333;transform:scaleX(0.8300);transform-origin:right center;white-space:pre;">100.0</div>
<div style="left:1021.98px;top:213.15px;font-size:10px;line-height:14.0px;color:#333;transform:scaleX(0.8300);transform-origin:right center;white-space:pre;">100.0</div>
<div style="left:1061.98px;top:213.15px;font-size:10px;line-height:14.0px;color:#333;transform:scaleX(0.8300);transform-origin:right center;white-space:pre;">100.0</div>
<div style="left:1101.98px;top:213.15px;font-size:10px;line-height:14.0px;color:#333;transform:scaleX(0.8300);transform-origin:right center;white-space:pre;">100.0</div>
<div style="left:301.98px;top:226.73px;font-size:10px;line-height:14.0px;color:#333;transform:scaleX(0.8300);transform-origin:right center;white-space:pre;">100.0</div>
<div style="left:341.98px;top:226.73px;font-size:10px;line-height:14.0px;color:#333;transform:scaleX(0.8300);transform-origin:right center;white-space:pre;">100.0</div>
<div style="left:381.98px;top:226.73px;font-size:10px;line-height:14.0px;color:#333;transform:scaleX(0.8300);transform-origin:right center;white-space:pre;">100.0</div>
<div style="left:421.98px;top:226.73px;font-size:10px;line-height:14.0px;color:#333;transform:scaleX(0.8300);transform-origin:right center;white-space:pre;">100.0</div>
<div style="left:461.98px;top:226.73px;font-size:10px;line-height:14.0px;color:#333;transform:scaleX(0.8300);transform-origin:right center;white-space:pre;">100.0</div>
<div style="left:501.98px;top:226.73px;font-size:10px;line-height:14.0px;color:#333;transform:scaleX(0.8300);transform-origin:right center;white-space:pre;">100.0</div>
<div style="left:541.98px;top:226.73px;font-size:10px;line-height:14.0px;color:#333;transform:scaleX(0.8300);transform-origin:right center;white-space:pre;">100.0</div>
<div style="left:581.98px;top:226.73px;font-size:10px;line-height:14.0px;color:#333;transform:scaleX(0.8300);transform-origin:right center;white-space:pre;">100.0</div>
<div style="left:621.98px;top:226.73px;font-size:10px;line-height:14.0px;color:#333;transform:scaleX(0.8300);transform-origin:right center;white-space:pre;">100.0</div>
<div style="left:661.98px;top:226.73px;font-size:10px;line-height:14.0px;color:#333;transform:scaleX(0.8300);transform-origin:right center;white-space:pre;">100.0</div>
<div style="left:701.98px;top:226.73px;font-size:10px;line-height:14.0px;color:#333;transform:scaleX(0.8300);transform-origin:right center;white-space:pre;">100.0</div>
<div style="left:741.98px;top:226.73px;font-size:10px;line-height:14.0px;color:#333;transform:scaleX(0.8300);transform-origin:right center;white-space:pre;">100.0</div>
<div style="left:781.98px;top:226.73px;font-size:10px;line-height:14.0px;color:#333;transform:scaleX(0.8300);transform-origin:right center;white-space:pre;">100.0</div>
<div style="left:821.98px;top:226.73px;font-size:10px;line-height:14.0px;color:#333;transform:scaleX(0.8300);transform-origin:right center;white-space:pre;">100.0</div>
<div style="left:861.98px;top:226.73px;font-size:10px;line-height:14.0px;color:#333;transform:scaleX(0.8300);transform-origin:right center;white-space:pre;">100.0</div>
<div style="left:901.98px;top:226.73px;font-size:10px;line-height:14.0px;color:#333;transform:scaleX(0.8300);transform-origin:right center;white-space:pre;">100.0</div>
<div style="left:941.98px;top:226.73px;font-size:10px;line-height:14.0px;color:#333;transform:scaleX(0.8300);transform-origin:right center;white-space:pre;">100.0</div>
<div style="left:981.98px;top:226.73px;font-size:10px;line-height:14.0px;color:#333;transform:scaleX(0.8300);transform-origin:right center;white-space:pre;">100.0</div>
<div style="left:1021.98px;top:226.73px;font-size:10px;line-height:14.0px;color:#333;transform:scaleX(0.8300);transform-origin:right center;white-space:pre;">100.0</div>
<div style="left:1061.98px;top:226.73px;font-size:10px;line-height:14.0px;color:#333;transform:scaleX(0.8300);transform-origin:right center;white-space:pre;">100.0</div>
<div style="left:1101.98px;top:226.73px;font-size:10px;line-height:14.0px;color:#333;transform:scaleX(0.8300);transform-origin:right center;white-space:pre;">100.0</div>
<div style="left:301.98px;top:240.31px;font-size:10px;line-height:14.0px;color:#333;transform:scaleX(0.8300);transform-origin:right center;white-space:pre;">100.0</div>
<div style="left:341.98px;top:240.31px;font-size:10px;line-height:14.0px;color:#333;transform:scaleX(0.8300);transform-origin:right center;white-space:pre;">100.0</div>
<div style="left:381.98px;top:240.31px;font-size:10px;line-height:14.0px;color:#333;transform:scaleX(0.8300);transform-origin:right center;white-space:pre;">100.0</div>
<div style="left:421.98px;top:240.31px;font-size:10px;line-height:14.0px;color:#333;transform:scaleX(0.8300);transform-origin:right center;white-space:pre;">100.0</div>
<div style="left:461.98px;top:240.31px;font-size:10px;line-height:14.0px;color:#333;transform:scaleX(0.8300);transform-origin:right center;white-space:pre;">100.0</div>
<div style="left:501.98px;top:240.31px;font-size:10px;line-height:14.0px;color:#333;transform:scaleX(0.8300);transform-origin:right center;white-space:pre;">100.0</div>
<div style="left:541.98px;top:240.31px;font-size:10px;line-height:14.0px;color:#333;transform:scaleX(0.8300);transform-origin:right center;white-space:pre;">100.0</div>
<div style="left:581.98px;top:240.31px;font-size:10px;line-height:14.0px;color:#333;transform:scaleX(0.8300);transform-origin:right center;white-space:pre;">100.0</div>
<div style="left:621.98px;top:240.31px;font-size:10px;line-height:14.0px;color:#333;transform:scaleX(0.8300);transform-origin:right center;white-space:pre;">100.0</div>
<div style="left:661.98px;top:240.31px;font-size:10px;line-height:14.0px;color:#333;transform:scaleX(0.8300);transform-origin:right center;white-space:pre;">100.0</div>
<div style="left:701.98px;top:240.31px;font-size:10px;line-height:14.0px;color:#333;transform:scaleX(0.8300);transform-origin:right center;white-space:pre;">100.0</div>
<div style="left:741.98px;top:240.31px;font-size:10px;line-height:14.0px;color:#333;transform:scaleX(0.8300);transform-origin:right center;white-space:pre;">100.0</div>
<div style="left:781.98px;top:240.31px;font-size:10px;line-height:14.0px;color:#333;transform:scaleX(0.8300);transform-origin:right center;white-space:pre;">100.0</div>
<div style="left:821.98px;top:240.31px;font-size:10px;line-height:14.0px;color:#333;transform:scaleX(0.8300);transform-origin:right center;white-space:pre;">100.0</div>
<div style="left:861.98px;top:240.31px;font-size:10px;line-height:14.0px;color:#333;transform:scaleX(0.8300);transform-origin:right center;white-space:pre;">100.0</div>
<div style="left:901.98px;top:240.31px;font-size:10px;line-height:14.0px;color:#333;transform:scaleX(0.8300);transform-origin:right center;white-space:pre;">100.0</div>
<div style="left:941.98px;top:240.31px;font-size:10px;line-height:14.0px;color:#333;transform:scaleX(0.8300);transform-origin:right center;white-space:pre;">100.0</div>
<div style="left:981.98px;top:240.31px;font-size:10px;line-height:14.0px;color:#333;transform:scaleX(0.8300);transform-origin:right center;white-space:pre;">100.0</div>
<div style="left:1021.98px;top:240.31px;font-size:10px;line-height:14.0px;color:#333;transform:scaleX(0.8300);transform-origin:right center;white-space:pre;">100.0</div>
<div style="left:1061.98px;top:240.31px;font-size:10px;line-height:14.0px;color:#333;transform:scaleX(0.8300);transform-origin:right center;white-space:pre;">100.0</div>
<div style="left:1101.98px;top:240.31px;font-size:10px;line-height:14.0px;color:#333;transform:scaleX(0.8300);transform-origin:right center;white-space:pre;">100.0</div>
<div style="left:301.98px;top:253.89px;font-size:10px;line-height:14.0px;color:#333;transform:scaleX(0.8300);transform-origin:right center;white-space:pre;">100.0</div>
<div style="left:341.98px;top:253.89px;font-size:10px;line-height:14.0px;color:#333;transform:scaleX(0.8300);transform-origin:right center;white-space:pre;">100.0</div>
<div style="left:381.98px;top:253.89px;font-size:10px;line-height:14.0px;color:#333;transform:scaleX(0.8300);transform-origin:right center;white-space:pre;">100.0</div>
<div style="left:421.98px;top:253.89px;font-size:10px;line-height:14.0px;color:#333;transform:scaleX(0.8300);transform-origin:right center;white-space:pre;">100.0</div>
<div style="left:461.98px;top:253.89px;font-size:10px;line-height:14.0px;color:#333;transform:scaleX(0.8300);transform-origin:right center;white-space:pre;">100.0</div>
<div style="left:501.98px;top:253.89px;font-size:10px;line-height:14.0px;color:#333;transform:scaleX(0.8300);transform-origin:right center;white-space:pre;">100.0</div>
<div style="left:541.98px;top:253.89px;font-size:10px;line-height:14.0px;color:#333;transform:scaleX(0.8300);transform-origin:right center;white-space:pre;">100.0</div>
<div style="left:581.98px;top:253.89px;font-size:10px;line-height:14.0px;color:#333;transform:scaleX(0.8300);transform-origin:right center;white-space:pre;">100.0</div>
<div style="left:621.98px;top:253.89px;font-size:10px;line-height:14.0px;color:#333;transform:scaleX(0.8300);transform-origin:right center;white-space:pre;">100.0</div>
<div style="left:661.98px;top:253.89px;font-size:10px;line-height:14.0px;color:#333;transform:scaleX(0.8300);transform-origin:right center;white-space:pre;">100.0</div>
<div style="left:701.98px;top:253.89px;font-size:10px;line-height:14.0px;color:#333;transform:scaleX(0.8300);transform-origin:right center;white-space:pre;">100.0</div>
<div style="left:741.98px;top:253.89px;font-size:10px;line-height:14.0px;color:#333;transform:scaleX(0.8300);transform-origin:right center;white-space:pre;">100.0</div>
<div style="left:781.98px;top:253.89px;font-size:10px;line-height:14.0px;color:#333;transform:scaleX(0.8300);transform-origin:right center;white-space:pre;">100.0</div>
<div style="left:821.98px;top:253.89px;font-size:10px;line-height:14.0px;color:#333;transform:scaleX(0.8300);transform-origin:right center;white-space:pre;">100.0</div>
<div style="left:861.98px;top:253.89px;font-size:10px;line-height:14.0px;color:#333;transform:scaleX(0.8300);transform-origin:right center;white-space:pre;">100.0</div>
<div style="left:901.98px;top:253.89px;font-size:10px;line-height:14.0px;color:#333;transform:scaleX(0.8300);transform-origin:right center;white-space:pre;">100.0</div>
<div style="left:941.98px;top:253.89px;font-size:10px;line-height:14.0px;color:#333;transform:scaleX(0.8300);transform-origin:right center;white-space:pre;">100.0</div>
<div style="left:981.98px;top:253.89px;font-size:10px;line-height:14.0px;color:#333;transform:scaleX(0.8300);transform-origin:right center;white-space:pre;">100.0</div>
<div style="left:1021.98px;top:253.89px;font-size:10px;line-height:14.0px;color:#333;transform:scaleX(0.8300);transform-origin:right center;white-space:pre;">100.0</div>
<div style="left:1061.98px;top:253.89px;font-size:10px;line-height:14.0px;color:#333;transform:scaleX(0.8300);transform-origin:right center;white-space:pre;">100.0</div>
<div style="left:1101.98px;top:253.89px;font-size:10px;line-height:14.0px;color:#333;transform:scaleX(0.8300);transform-origin:right center;white-space:pre;">100.0</div>
<div style="left:289px;top:267px;width:40px;height:14px;background:#1a66d4"></div>
<div style="left:301.98px;top:267.47px;font-size:10px;line-height:14.0px;color:#fff;transform:scaleX(0.8300);transform-origin:right center;white-space:pre;">100.0</div>
<div style="left:341.98px;top:267.47px;font-size:10px;line-height:14.0px;color:#333;transform:scaleX(0.8300);transform-origin:right center;white-space:pre;">100.0</div>
<div style="left:381.98px;top:267.47px;font-size:10px;line-height:14.0px;color:#333;transform:scaleX(0.8300);transform-origin:right center;white-space:pre;">100.0</div>
<div style="left:421.98px;top:267.47px;font-size:10px;line-height:14.0px;color:#333;transform:scaleX(0.8300);transform-origin:right center;white-space:pre;">100.0</div>
<div style="left:461.98px;top:267.47px;font-size:10px;line-height:14.0px;color:#333;transform:scaleX(0.8300);transform-origin:right center;white-space:pre;">100.0</div>
<div style="left:501.98px;top:267.47px;font-size:10px;line-height:14.0px;color:#333;transform:scaleX(0.8300);transform-origin:right center;white-space:pre;">100.0</div>
<div style="left:541.98px;top:267.47px;font-size:10px;line-height:14.0px;color:#333;transform:scaleX(0.8300);transform-origin:right center;white-space:pre;">100.0</div>
<div style="left:581.98px;top:267.47px;font-size:10px;line-height:14.0px;color:#333;transform:scaleX(0.8300);transform-origin:right center;white-space:pre;">100.0</div>
<div style="left:621.98px;top:267.47px;font-size:10px;line-height:14.0px;color:#333;transform:scaleX(0.8300);transform-origin:right center;white-space:pre;">100.0</div>
<div style="left:661.98px;top:267.47px;font-size:10px;line-height:14.0px;color:#333;transform:scaleX(0.8300);transform-origin:right center;white-space:pre;">100.0</div>
<div style="left:701.98px;top:267.47px;font-size:10px;line-height:14.0px;color:#333;transform:scaleX(0.8300);transform-origin:right center;white-space:pre;">100.0</div>
<div style="left:741.98px;top:267.47px;font-size:10px;line-height:14.0px;color:#333;transform:scaleX(0.8300);transform-origin:right center;white-space:pre;">100.0</div>
<div style="left:781.98px;top:267.47px;font-size:10px;line-height:14.0px;color:#333;transform:scaleX(0.8300);transform-origin:right center;white-space:pre;">100.0</div>
<div style="left:821.98px;top:267.47px;font-size:10px;line-height:14.0px;color:#333;transform:scaleX(0.8300);transform-origin:right center;white-space:pre;">100.0</div>
<div style="left:861.98px;top:267.47px;font-size:10px;line-height:14.0px;color:#333;transform:scaleX(0.8300);transform-origin:right center;white-space:pre;">100.0</div>
<div style="left:901.98px;top:267.47px;font-size:10px;line-height:14.0px;color:#333;transform:scaleX(0.8300);transform-origin:right center;white-space:pre;">100.0</div>
<div style="left:941.98px;top:267.47px;font-size:10px;line-height:14.0px;color:#333;transform:scaleX(0.8300);transform-origin:right center;white-space:pre;">100.0</div>
<div style="left:981.98px;top:267.47px;font-size:10px;line-height:14.0px;color:#333;transform:scaleX(0.8300);transform-origin:right center;white-space:pre;">100.0</div>
<div style="left:1021.98px;top:267.47px;font-size:10px;line-height:14.0px;color:#333;transform:scaleX(0.8300);transform-origin:right center;white-space:pre;">100.0</div>
<div style="left:1061.98px;top:267.47px;font-size:10px;line-height:14.0px;color:#333;transform:scaleX(0.8300);transform-origin:right center;white-space:pre;">100.0</div>
<div style="left:1101.98px;top:267.47px;font-size:10px;line-height:14.0px;color:#333;transform:scaleX(0.8300);transform-origin:right center;white-space:pre;">100.0</div>
<div style="left:289px;top:130px;width:840px;height:1px;background:#e6e6e6"></div>
<div style="left:289px;top:144px;width:840px;height:1px;background:#e6e6e6"></div>
<div style="left:289px;top:158px;width:840px;height:1px;background:#e6e6e6"></div>
<div style="left:289px;top:171px;width:840px;height:1px;background:#e6e6e6"></div>
<div style="left:289px;top:185px;width:840px;height:1px;background:#e6e6e6"></div>
<div style="left:289px;top:198px;width:840px;height:1px;background:#e6e6e6"></div>
<div style="left:289px;top:212px;width:840px;height:1px;background:#e6e6e6"></div>
<div style="left:289px;top:225px;width:840px;height:1px;background:#e6e6e6"></div>
<div style="left:289px;top:239px;width:840px;height:1px;background:#e6e6e6"></div>
<div style="left:289px;top:253px;width:840px;height:1px;background:#e6e6e6"></div>
<div style="left:289px;top:266px;width:840px;height:1px;background:#e6e6e6"></div>
<div style="left:289px;top:280px;width:840px;height:1px;background:#e6e6e6"></div>
<div style="left:329px;top:117px;width:1px;height:163px;background:#ececec"></div>
<div style="left:369px;top:117px;width:1px;height:163px;background:#ececec"></div>
<div style="left:409px;top:117px;width:1px;height:163px;background:#ececec"></div>
<div style="left:449px;top:117px;width:1px;height:163px;background:#ececec"></div>
<div style="left:489px;top:117px;width:1px;height:163px;background:#ececec"></div>
<div style="left:529px;top:117px;width:1px;height:163px;background:#ececec"></div>
<div style="left:569px;top:117px;width:1px;height:163px;background:#ececec"></div>
<div style="left:609px;top:117px;width:1px;height:163px;background:#ececec"></div>
<div style="left:649px;top:117px;width:1px;height:163px;background:#ececec"></div>
<div style="left:689px;top:117px;width:1px;height:163px;background:#ececec"></div>
<div style="left:729px;top:117px;width:1px;height:163px;background:#ececec"></div>
<div style="left:769px;top:117px;width:1px;height:163px;background:#ececec"></div>
<div style="left:809px;top:117px;width:1px;height:163px;background:#ececec"></div>
<div style="left:849px;top:117px;width:1px;height:163px;background:#ececec"></div>
<div style="left:889px;top:117px;width:1px;height:163px;background:#ececec"></div>
<div style="left:929px;top:117px;width:1px;height:163px;background:#ececec"></div>
<div style="left:969px;top:117px;width:1px;height:163px;background:#ececec"></div>
<div style="left:1009px;top:117px;width:1px;height:163px;background:#ececec"></div>
<div style="left:1049px;top:117px;width:1px;height:163px;background:#ececec"></div>
<div style="left:1089px;top:117px;width:1px;height:163px;background:#ececec"></div>
<div style="left:1129px;top:117px;width:1px;height:163px;background:#ececec"></div>
<div style="left:289px;top:117px;width:40px;height:14px;border:1px solid #c07070;box-sizing:border-box"></div>
<div style="left:185px;top:376px;width:1020px;height:53px;background:#fff;border-top:1px solid #c4c4c4;border-left:1px solid #c8c8c8;box-sizing:border-box"></div>
<div style="left:524px;top:378px;width:1px;height:50px;background:#a0a0a0"></div>
<div style="left:863px;top:378px;width:1px;height:50px;background:#a0a0a0"></div>
<div style="left:189.00px;top:378.30px;font-size:10px;line-height:14.0px;color:#333;transform:scaleX(0.8300);transform-origin:left center;white-space:pre;">Fuel Overall Trim (%)</div>
<div style="left:506.10px;top:378.30px;font-size:10px;line-height:14.0px;color:#333;transform:scaleX(0.8300);transform-origin:right center;white-space:pre;">0.0</div>
<div style="left:189.00px;top:388.60px;font-size:10px;line-height:14.0px;color:#333;transform:scaleX(0.8300);transform-origin:left center;white-space:pre;">Fuel Trims (ms)</div>
<div style="left:492.39px;top:388.60px;font-size:10px;line-height:14.0px;color:#333;transform:scaleX(0.8300);transform-origin:right center;white-space:pre;">-11.53</div>
<div style="left:189.00px;top:398.90px;font-size:10px;line-height:14.0px;color:#333;transform:scaleX(0.8300);transform-origin:left center;white-space:pre;">La1 Aim Value</div>
<div style="left:500.54px;top:398.90px;font-size:10px;line-height:14.0px;color:#333;transform:scaleX(0.8300);transform-origin:right center;white-space:pre;">0.90</div>
<div style="left:189.00px;top:409.20px;font-size:10px;line-height:14.0px;color:#333;transform:scaleX(0.8300);transform-origin:left center;white-space:pre;">Lambda Diff</div>
<div style="left:497.95px;top:409.20px;font-size:10px;line-height:14.0px;color:#333;transform:scaleX(0.8300);transform-origin:right center;white-space:pre;">-2.11</div>
<div style="left:528.00px;top:378.30px;font-size:10px;line-height:14.0px;color:#333;transform:scaleX(0.8300);transform-origin:left center;white-space:pre;">Ignition Advance (dBTDC)</div>
<div style="left:845.10px;top:378.30px;font-size:10px;line-height:14.0px;color:#333;transform:scaleX(0.8300);transform-origin:right center;white-space:pre;">9.5</div>
<div style="left:69px;top:431px;width:1px;height:236px;background:#a0a0a0"></div>
<div style="left:73.00px;top:432.00px;font-size:10px;line-height:14.0px;color:#d05050;transform:scaleX(0.8320);transform-origin:left center;white-space:pre;">Lambda 1</div>
<div style="left:350.54px;top:432.00px;font-size:10px;line-height:14.0px;color:#d05050;transform:scaleX(0.8300);transform-origin:right center;white-space:pre;">1.57</div>
<div style="left:73.00px;top:442.50px;font-size:10px;line-height:14.0px;color:#4a9a55;transform:scaleX(0.8550);transform-origin:left center;white-space:pre;">La1 Aim Value</div>
<div style="left:350.54px;top:442.50px;font-size:10px;line-height:14.0px;color:#4a9a55;transform:scaleX(0.8300);transform-origin:right center;white-space:pre;">0.90</div>
<div style="left:99px;top:456px;width:272px;height:191px;background:#fff"></div>
<div style="left:99px;top:455px;width:1px;height:192px;background:#909090"></div>
<div style="left:99px;top:455px;width:272px;height:1px;background:#a0a0a0"></div>
<div style="left:75.54px;top:454.00px;font-size:10px;line-height:14.0px;color:#333;transform:scaleX(0.8300);transform-origin:right center;white-space:pre;">1.10</div>
<div style="left:75.54px;top:635.70px;font-size:10px;line-height:14.0px;color:#333;transform:scaleX(0.8300);transform-origin:right center;white-space:pre;">0.70</div>
<div style="left:99.00px;top:648.00px;font-size:10px;line-height:14.0px;color:#333;transform:scaleX(0.8696);transform-origin:left center;white-space:pre;">- 20.0 s</div>
<div style="left:348.32px;top:648.00px;font-size:10px;line-height:14.0px;color:#333;transform:scaleX(0.8300);transform-origin:right center;white-space:pre;">0.0 s</div>
<div style="left:69px;top:661px;width:303px;height:1px;background:#a0a0a0"></div>
<div style="left:69px;top:662px;width:303px;height:1px;background:#ffffff"></div>
<svg style="left:99px;top:456px" width="272" height="191" viewBox="0 0 272 191"><line x1="0" y1="47.5" x2="272" y2="47.5" stroke="#666" stroke-width="1" stroke-dasharray="2.5 2.5"/><line x1="0" y1="95" x2="272" y2="95" stroke="#666" stroke-width="1" stroke-dasharray="2.5 2.5"/><line x1="0" y1="143" x2="272" y2="143" stroke="#666" stroke-width="1" stroke-dasharray="2.5 2.5"/><line x1="68.5" y1="0" x2="68.5" y2="191" stroke="#666" stroke-width="1" stroke-dasharray="2.5 2.5"/><line x1="136" y1="0" x2="136" y2="191" stroke="#666" stroke-width="1" stroke-dasharray="2.5 2.5"/><line x1="203.5" y1="0" x2="203.5" y2="191" stroke="#666" stroke-width="1" stroke-dasharray="2.5 2.5"/><polyline points="0,95 29,95 36.5,191" fill="none" stroke="#2a8a2a" stroke-width="1.8"/><polyline points="69.6,191 69.6,95 272,95" fill="none" stroke="#2a8a2a" stroke-width="1.8"/><polyline points="40,0 48.8,191" fill="none" stroke="#d02020" stroke-width="1.6"/><polyline points="66.4,0 66.4,191" fill="none" stroke="#d02020" stroke-width="1.6"/></svg>
<div style="left:372px;top:431px;width:1px;height:231px;background:#a0a0a0"></div>
<div style="left:373px;top:431px;width:1px;height:231px;background:#ffffff"></div>
<div style="left:420px;top:431px;width:1px;height:118px;background:#a0a0a0"></div>
<div style="left:421px;top:431px;width:1px;height:118px;background:#ffffff"></div>
<div style="left:377.00px;top:432.00px;font-size:10px;line-height:14.0px;color:#333;transform:scaleX(0.8300);transform-origin:left center;white-space:pre;">La Diff</div>
<div style="left:403.5px;top:445px;width:12px;height:99px;background:#fff"></div>
<div style="left:403.5px;top:445px;width:1px;height:99px;background:#808080"></div>
<div style="left:403.5px;top:445px;width:11.0px;height:1px;background:#909090"></div>
<div style="left:403.5px;top:485px;width:12.0px;height:1px;background:#222"></div>
<div style="left:403.5px;top:504px;width:12.0px;height:1px;background:#222"></div>
<div style="left:382.04px;top:443.70px;font-size:10px;line-height:14.0px;color:#333;transform:scaleX(0.8300);transform-origin:right center;white-space:pre;">0.05</div>
<div style="left:379.45px;top:487.50px;font-size:10px;line-height:14.0px;color:#4a88c8;transform:scaleX(0.8300);transform-origin:right center;white-space:pre;">-2.11</div>
<div style="left:378.71px;top:533.00px;font-size:10px;line-height:14.0px;color:#333;transform:scaleX(0.8300);transform-origin:right center;white-space:pre;">-0.05</div>
<div style="left:468px;top:431px;width:1px;height:118px;background:#a0a0a0"></div>
<div style="left:469px;top:431px;width:1px;height:118px;background:#ffffff"></div>
<div style="left:424.00px;top:432.00px;font-size:10px;line-height:14.0px;color:#333;transform:scaleX(0.8300);transform-origin:left center;white-space:pre;">Bat V (V)</div>
<div style="left:451.7px;top:445px;width:12px;height:99px;background:#fff"></div>
<div style="left:451.7px;top:445px;width:1px;height:99px;background:#808080"></div>
<div style="left:451.7px;top:445px;width:11.0px;height:1px;background:#909090"></div>
<div style="left:451.7px;top:463px;width:12.0px;height:1px;background:#222"></div>
<div style="left:451.7px;top:476px;width:12.0px;height:1px;background:#222"></div>
<div style="left:452.7px;top:493px;width:11px;height:51px;background:#0a7070"></div>
<div style="left:430.24px;top:443.70px;font-size:10px;line-height:14.0px;color:#333;transform:scaleX(0.8300);transform-origin:right center;white-space:pre;">16.0</div>
<div style="left:430.24px;top:487.50px;font-size:10px;line-height:14.0px;color:#3a8a8a;transform:scaleX(0.8300);transform-origin:right center;white-space:pre;">12.1</div>
<div style="left:435.80px;top:533.00px;font-size:10px;line-height:14.0px;color:#333;transform:scaleX(0.8300);transform-origin:right center;white-space:pre;">8.0</div>
<div style="left:516px;top:431px;width:1px;height:118px;background:#a0a0a0"></div>
<div style="left:517px;top:431px;width:1px;height:118px;background:#ffffff"></div>
<div style="left:472.00px;top:432.00px;font-size:10px;line-height:14.0px;color:#333;transform:scaleX(0.8300);transform-origin:left center;white-space:pre;">FP</div>
<div style="left:499.8px;top:445px;width:12px;height:99px;background:#fff"></div>
<div style="left:499.8px;top:445px;width:1px;height:99px;background:#808080"></div>
<div style="left:499.8px;top:445px;width:11.0px;height:1px;background:#909090"></div>
<div style="left:472.78px;top:443.70px;font-size:10px;line-height:14.0px;color:#333;transform:scaleX(0.8300);transform-origin:right center;white-space:pre;">149.9</div>
<div style="left:483.90px;top:487.50px;font-size:10px;line-height:14.0px;color:#4a88c8;transform:scaleX(0.8300);transform-origin:right center;white-space:pre;">0.0</div>
<div style="left:483.90px;top:533.00px;font-size:10px;line-height:14.0px;color:#333;transform:scaleX(0.8300);transform-origin:right center;white-space:pre;">0.0</div>
<div style="left:374px;top:549px;width:143px;height:1px;background:#a0a0a0"></div>
<div style="left:374px;top:550px;width:143px;height:1px;background:#ffffff"></div>
<div style="left:420px;top:550px;width:1px;height:111px;background:#a0a0a0"></div>
<div style="left:421px;top:550px;width:1px;height:111px;background:#ffffff"></div>
<div style="left:377.00px;top:551.00px;font-size:10px;line-height:14.0px;color:#333;transform:scaleX(0.8300);transform-origin:left center;white-space:pre;">ET (C)</div>
<div style="left:403.8px;top:565px;width:12px;height:91px;background:#fff"></div>
<div style="left:403.8px;top:565px;width:1px;height:91px;background:#808080"></div>
<div style="left:403.8px;top:565px;width:11.0px;height:1px;background:#909090"></div>
<div style="left:403.8px;top:575.6px;width:12.0px;height:1px;background:#222"></div>
<div style="left:403.8px;top:595px;width:12.0px;height:1px;background:#222"></div>
<div style="left:404.8px;top:638.4px;width:11px;height:17.600000000000023px;background:#ee1111"></div>
<div style="left:377.52px;top:563.70px;font-size:10px;line-height:14.0px;color:#333;transform:scaleX(0.8300);transform-origin:right center;white-space:pre;">110.0</div>
<div style="left:382.34px;top:603.50px;font-size:10px;line-height:14.0px;color:#d03a3a;transform:scaleX(0.8300);transform-origin:right center;white-space:pre;">37.1</div>
<div style="left:382.34px;top:645.00px;font-size:10px;line-height:14.0px;color:#333;transform:scaleX(0.8300);transform-origin:right center;white-space:pre;">20.0</div>
<div style="left:468px;top:550px;width:1px;height:111px;background:#a0a0a0"></div>
<div style="left:469px;top:550px;width:1px;height:111px;background:#ffffff"></div>
<div style="left:424.00px;top:551.00px;font-size:10px;line-height:14.0px;color:#333;transform:scaleX(0.8300);transform-origin:left center;white-space:pre;">AT (C)</div>
<div style="left:451.6px;top:565px;width:12px;height:91px;background:#fff"></div>
<div style="left:451.6px;top:565px;width:1px;height:91px;background:#808080"></div>
<div style="left:451.6px;top:565px;width:11.0px;height:1px;background:#909090"></div>
<div style="left:452.6px;top:641.8px;width:11px;height:14.200000000000045px;background:#ee1111"></div>
<div style="left:424.58px;top:563.70px;font-size:10px;line-height:14.0px;color:#333;transform:scaleX(0.8300);transform-origin:right center;white-space:pre;">100.0</div>
<div style="left:430.14px;top:603.50px;font-size:10px;line-height:14.0px;color:#d03a3a;transform:scaleX(0.8300);transform-origin:right center;white-space:pre;">15.4</div>
<div style="left:435.70px;top:645.00px;font-size:10px;line-height:14.0px;color:#333;transform:scaleX(0.8300);transform-origin:right center;white-space:pre;">0.0</div>
<div style="left:516px;top:550px;width:1px;height:111px;background:#a0a0a0"></div>
<div style="left:517px;top:550px;width:1px;height:111px;background:#ffffff"></div>
<div style="left:472.00px;top:551.00px;font-size:10px;line-height:14.0px;color:#aaa;transform:scaleX(0.8300);transform-origin:left center;white-space:pre;">OP</div>
<div style="left:499.8px;top:565px;width:12px;height:91px;background:#fff"></div>
<div style="left:499.8px;top:565px;width:1px;height:91px;background:#808080"></div>
<div style="left:499.8px;top:565px;width:11.0px;height:1px;background:#909090"></div>
<div style="left:481.12px;top:563.70px;font-size:10px;line-height:14.0px;color:#aaa;transform:scaleX(0.8300);transform-origin:right center;white-space:pre;">150</div>
<div style="left:492.24px;top:603.50px;font-size:10px;line-height:14.0px;color:#aaa;transform:scaleX(0.8300);transform-origin:right center;white-space:pre;">0</div>
<div style="left:492.24px;top:645.00px;font-size:10px;line-height:14.0px;color:#aaa;transform:scaleX(0.8300);transform-origin:right center;white-space:pre;">0</div>
<div style="left:374px;top:661px;width:143px;height:1px;background:#a0a0a0"></div>
<div style="left:374px;top:662px;width:143px;height:1px;background:#ffffff"></div>
<div style="left:517px;top:431px;width:1px;height:231px;background:#ffffff"></div>
<div style="left:521.00px;top:431.70px;font-size:10px;line-height:14.0px;color:#333;transform:scaleX(0.8300);transform-origin:left center;white-space:pre;">Main</div>
<div style="left:521px;top:445.5px;width:185px;height:100.5px;background:#fff;border-top:1px solid #a0a0a0;border-left:1px solid #a0a0a0;box-sizing:border-box"></div>
<div style="left:525.00px;top:445.70px;font-size:10px;line-height:14.0px;color:#333;transform:scaleX(0.8300);transform-origin:left center;white-space:pre;">RPM</div>
<div style="left:697.14px;top:445.70px;font-size:10px;line-height:14.0px;color:#333;transform:scaleX(0.8300);transform-origin:right center;white-space:pre;">0</div>
<div style="left:525.00px;top:456.15px;font-size:10px;line-height:14.0px;color:#333;transform:scaleX(0.8300);transform-origin:left center;white-space:pre;">Efficiency Point (kPa)</div>
<div style="left:677.68px;top:456.15px;font-size:10px;line-height:14.0px;color:#333;transform:scaleX(0.8300);transform-origin:right center;white-space:pre;">296.0</div>
<div style="left:525.00px;top:466.60px;font-size:10px;line-height:14.0px;color:#333;transform:scaleX(0.8300);transform-origin:left center;white-space:pre;">Load Point (kPa)</div>
<div style="left:677.68px;top:466.60px;font-size:10px;line-height:14.0px;color:#333;transform:scaleX(0.8300);transform-origin:right center;white-space:pre;">296.0</div>
<div style="left:525.00px;top:477.05px;font-size:10px;line-height:14.0px;color:#333;transform:scaleX(0.8300);transform-origin:left center;white-space:pre;">Ground Speed</div>
<div style="left:688.80px;top:477.05px;font-size:10px;line-height:14.0px;color:#333;transform:scaleX(0.8300);transform-origin:right center;white-space:pre;">0.0</div>
<div style="left:525.00px;top:487.50px;font-size:10px;line-height:14.0px;color:#333;transform:scaleX(0.8300);transform-origin:left center;white-space:pre;">Drive Speed</div>
<div style="left:688.80px;top:487.50px;font-size:10px;line-height:14.0px;color:#333;transform:scaleX(0.8300);transform-origin:right center;white-space:pre;">0.0</div>
<div style="left:525.00px;top:497.95px;font-size:10px;line-height:14.0px;color:#333;transform:scaleX(0.8300);transform-origin:left center;white-space:pre;">Wheel Slip</div>
<div style="left:688.80px;top:497.95px;font-size:10px;line-height:14.0px;color:#333;transform:scaleX(0.8300);transform-origin:right center;white-space:pre;">0.0</div>
<div style="left:525.00px;top:508.40px;font-size:10px;line-height:14.0px;color:#a8a8a8;transform:scaleX(0.8300);transform-origin:left center;white-space:pre;">Oil Temp</div>
<div style="left:525.00px;top:518.85px;font-size:10px;line-height:14.0px;color:#a8a8a8;transform:scaleX(0.8300);transform-origin:left center;white-space:pre;">Exhaust Man Pressure</div>
<div style="left:518px;top:548px;width:191px;height:1px;background:#a0a0a0"></div>
<div style="left:518px;top:549px;width:191px;height:1px;background:#ffffff"></div>
<div style="left:521.00px;top:551.70px;font-size:10px;line-height:14.0px;color:#333;transform:scaleX(0.8300);transform-origin:left center;white-space:pre;">Sensors</div>
<div style="left:521px;top:565px;width:185px;height:94px;background:#fff;border-top:1px solid #a0a0a0;border-left:1px solid #a0a0a0;box-sizing:border-box"></div>
<div style="left:525.00px;top:565.70px;font-size:10px;line-height:14.0px;color:#333;transform:scaleX(0.8300);transform-origin:left center;white-space:pre;">Throttle Position (%)</div>
<div style="left:688.80px;top:565.70px;font-size:10px;line-height:14.0px;color:#333;transform:scaleX(0.8300);transform-origin:right center;white-space:pre;">0.0</div>
<div style="left:525.00px;top:576.10px;font-size:10px;line-height:14.0px;color:#333;transform:scaleX(0.8300);transform-origin:left center;white-space:pre;">Manifold Pressure (kPa)</div>
<div style="left:677.68px;top:576.10px;font-size:10px;line-height:14.0px;color:#333;transform:scaleX(0.8300);transform-origin:right center;white-space:pre;">296.0</div>
<div style="left:525.00px;top:586.50px;font-size:10px;line-height:14.0px;color:#a8a8a8;transform:scaleX(0.8300);transform-origin:left center;white-space:pre;">Exhaust Man Pressure</div>
<div style="left:525.00px;top:596.90px;font-size:10px;line-height:14.0px;color:#333;transform:scaleX(0.8300);transform-origin:left center;white-space:pre;">Battery Voltage (V)</div>
<div style="left:683.24px;top:596.90px;font-size:10px;line-height:14.0px;color:#333;transform:scaleX(0.8300);transform-origin:right center;white-space:pre;">12.1</div>
<div style="left:525.00px;top:607.30px;font-size:10px;line-height:14.0px;color:#333;transform:scaleX(0.8300);transform-origin:left center;white-space:pre;">Engine Temp (C)</div>
<div style="left:683.24px;top:607.30px;font-size:10px;line-height:14.0px;color:#333;transform:scaleX(0.8300);transform-origin:right center;white-space:pre;">37.1</div>
<div style="left:525.00px;top:617.70px;font-size:10px;line-height:14.0px;color:#333;transform:scaleX(0.8300);transform-origin:left center;white-space:pre;">Inlet Air Temp (C)</div>
<div style="left:683.24px;top:617.70px;font-size:10px;line-height:14.0px;color:#333;transform:scaleX(0.8300);transform-origin:right center;white-space:pre;">15.4</div>
<div style="left:525.00px;top:628.10px;font-size:10px;line-height:14.0px;color:#a8a8a8;transform:scaleX(0.8300);transform-origin:left center;white-space:pre;">Exhaust Gas Temp 1</div>
<div style="left:709px;top:431px;width:1px;height:231px;background:#a0a0a0"></div>
<div style="left:710px;top:431px;width:1px;height:231px;background:#ffffff"></div>
<div style="left:713.00px;top:432.40px;font-size:10px;line-height:14.0px;color:#333;transform:scaleX(0.8300);transform-origin:left center;white-space:pre;">Lambda</div>
<div style="left:713px;top:444.5px;width:114px;height:96.5px;background:#fff;border-top:1px solid #a0a0a0;border-left:1px solid #a0a0a0;box-sizing:border-box"></div>
<div style="left:716.70px;top:445.70px;font-size:10px;line-height:14.0px;color:#333;transform:scaleX(0.8300);transform-origin:left center;white-space:pre;">La1</div>
<div style="left:803.24px;top:445.70px;font-size:10px;line-height:14.0px;color:#333;transform:scaleX(0.8300);transform-origin:right center;white-space:pre;">1.57</div>
<div style="left:716.70px;top:456.10px;font-size:10px;line-height:14.0px;color:#333;transform:scaleX(0.8300);transform-origin:left center;white-space:pre;">La2</div>
<div style="left:803.24px;top:456.10px;font-size:10px;line-height:14.0px;color:#333;transform:scaleX(0.8300);transform-origin:right center;white-space:pre;">4.45</div>
<div style="left:716.70px;top:466.50px;font-size:10px;line-height:14.0px;color:#333;transform:scaleX(0.8300);transform-origin:left center;white-space:pre;">LaCtrl1</div>
<div style="left:809.55px;top:466.50px;font-size:10px;line-height:14.0px;color:#333;transform:scaleX(0.8300);transform-origin:right center;white-space:pre;">Off</div>
<div style="left:716.70px;top:476.90px;font-size:10px;line-height:14.0px;color:#333;transform:scaleX(0.8300);transform-origin:left center;white-space:pre;">LaCtrl2</div>
<div style="left:809.55px;top:476.90px;font-size:10px;line-height:14.0px;color:#333;transform:scaleX(0.8300);transform-origin:right center;white-space:pre;">Off</div>
<div style="left:716.70px;top:487.30px;font-size:10px;line-height:14.0px;color:#333;transform:scaleX(0.8300);transform-origin:left center;white-space:pre;">La1 STr (%)</div>
<div style="left:808.80px;top:487.30px;font-size:10px;line-height:14.0px;color:#333;transform:scaleX(0.8300);transform-origin:right center;white-space:pre;">0.0</div>
<div style="left:716.70px;top:497.70px;font-size:10px;line-height:14.0px;color:#333;transform:scaleX(0.8300);transform-origin:left center;white-space:pre;">La2 STr (%)</div>
<div style="left:808.80px;top:497.70px;font-size:10px;line-height:14.0px;color:#333;transform:scaleX(0.8300);transform-origin:right center;white-space:pre;">0.0</div>
<div style="left:710px;top:541.5px;width:119px;height:1px;background:#a0a0a0"></div>
<div style="left:710px;top:542.5px;width:119px;height:1px;background:#ffffff"></div>
<div style="left:713.00px;top:543.60px;font-size:10px;line-height:14.0px;color:#333;transform:scaleX(0.8300);transform-origin:left center;white-space:pre;">Fuel</div>
<div style="left:713px;top:557px;width:114px;height:47px;background:#fff;border-top:1px solid #a0a0a0;border-left:1px solid #a0a0a0;box-sizing:border-box"></div>
<div style="left:716.70px;top:557.75px;font-size:10px;line-height:14.0px;color:#333;transform:scaleX(0.8300);transform-origin:left center;white-space:pre;">F APW (ms)</div>
<div style="left:799.91px;top:557.75px;font-size:10px;line-height:14.0px;color:#333;transform:scaleX(0.8300);transform-origin:right center;white-space:pre;">-1.53</div>
<div style="left:716.70px;top:568.10px;font-size:10px;line-height:14.0px;color:#333;transform:scaleX(0.8300);transform-origin:left center;white-space:pre;">F Duty (%)</div>
<div style="left:808.80px;top:568.10px;font-size:10px;line-height:14.0px;color:#333;transform:scaleX(0.8300);transform-origin:right center;white-space:pre;">0.0</div>
<div style="left:716.70px;top:578.45px;font-size:10px;line-height:14.0px;color:#333;transform:scaleX(0.8300);transform-origin:left center;white-space:pre;">F Time (deg)</div>
<div style="left:797.68px;top:578.45px;font-size:10px;line-height:14.0px;color:#333;transform:scaleX(0.8300);transform-origin:right center;white-space:pre;">320.0</div>
<div style="left:716.70px;top:588.80px;font-size:10px;line-height:14.0px;color:#333;transform:scaleX(0.8300);transform-origin:left center;white-space:pre;">F Trims (ms)</div>
<div style="left:795.09px;top:588.80px;font-size:10px;line-height:14.0px;color:#333;transform:scaleX(0.8300);transform-origin:right center;white-space:pre;">-11.53</div>
<div style="left:710px;top:605px;width:119px;height:1px;background:#a0a0a0"></div>
<div style="left:710px;top:606px;width:119px;height:1px;background:#ffffff"></div>
<div style="left:713.00px;top:608.20px;font-size:10px;line-height:14.0px;color:#333;transform:scaleX(0.8300);transform-origin:left center;white-space:pre;">Ignition</div>
<div style="left:713px;top:621px;width:114px;height:39px;background:#fff;border-top:1px solid #a0a0a0;border-left:1px solid #a0a0a0;box-sizing:border-box"></div>
<div style="left:716.70px;top:621.90px;font-size:10px;line-height:14.0px;color:#333;transform:scaleX(0.8300);transform-origin:left center;white-space:pre;">Ign Adv (dBTDC)</div>
<div style="left:808.80px;top:621.90px;font-size:10px;line-height:14.0px;color:#333;transform:scaleX(0.8300);transform-origin:right center;white-space:pre;">9.5</div>
<div style="left:716.70px;top:632.30px;font-size:10px;line-height:14.0px;color:#333;transform:scaleX(0.8300);transform-origin:left center;white-space:pre;">I Trims (dBTDC)</div>
<div style="left:805.47px;top:632.30px;font-size:10px;line-height:14.0px;color:#333;transform:scaleX(0.8300);transform-origin:right center;white-space:pre;">-0.5</div>
<div style="left:829px;top:431px;width:1px;height:231px;background:#a0a0a0"></div>
<div style="left:830px;top:431px;width:1px;height:231px;background:#ffffff"></div>
<div style="left:518px;top:661px;width:312px;height:1px;background:#a0a0a0"></div>
<div style="left:518px;top:662px;width:312px;height:1px;background:#ffffff"></div>
<div style="left:835.00px;top:480.70px;font-size:10px;line-height:14.0px;color:#333;transform:scaleX(0.8300);transform-origin:left center;white-space:pre;">Table:</div>
<div style="left:846.68px;top:492.30px;font-size:10px;line-height:14.0px;color:#333;transform:scaleX(0.8300);transform-origin:right center;white-space:pre;">100.0</div>
<div style="left:835.00px;top:509.00px;font-size:10px;line-height:14.0px;color:#333;transform:scaleX(0.8300);transform-origin:left center;white-space:pre;">RPM:</div>
<div style="left:865.44px;top:520.00px;font-size:10px;line-height:14.0px;color:#4a7ad0;transform:scaleX(0.8300);transform-origin:right center;white-space:pre;">0</div>
<div style="left:835.00px;top:536.30px;font-size:10px;line-height:14.0px;color:#333;transform:scaleX(0.8300);transform-origin:left center;white-space:pre;">Effcy:</div>
<div style="left:857.80px;top:547.30px;font-size:10px;line-height:14.0px;color:#d04040;transform:scaleX(0.8300);transform-origin:right center;white-space:pre;">0.0</div>
<svg style="left:832px;top:433px" width="44" height="44" viewBox="0 0 44 44">
<g fill="#cc0000" stroke="#600" stroke-width="0.6">
<path d="M22 2L17 9H20.5V14H23.5V9H27Z"/><path d="M22 41L17 34H20.5V29H23.5V34H27Z"/>
<path d="M2.5 21.5L9.5 16.5V20H14V23H9.5V26.5Z"/><path d="M41 21.5L34 16.5V20H29.5V23H34V26.5Z"/></g>
<path d="M20.5 9V14M23.5 9V14" stroke="#300" stroke-width="0.8"/>
<circle cx="22" cy="21.5" r="6" fill="#9a9a9a" stroke="#555" stroke-width="0.8"/>
<circle cx="22" cy="21.5" r="3.2" fill="#2ab02a"/></svg>
<svg style="left:0px;top:0px" width="1280" height="720" viewBox="0 0 1280 720"><polygon points="889.3,505.0 966.7,450.0 1188.3,470.0 1108.3,524.3" fill="#fff"/><line x1="889.3" y1="505.0" x2="1108.3" y2="524.3" stroke="#555" stroke-width="0.9"/><line x1="893.2" y1="502.2" x2="1112.3" y2="521.6" stroke="#555" stroke-width="0.9"/><line x1="897.0" y1="499.5" x2="1116.3" y2="518.9" stroke="#555" stroke-width="0.9"/><line x1="900.9" y1="496.8" x2="1120.3" y2="516.2" stroke="#555" stroke-width="0.9"/><line x1="904.8" y1="494.0" x2="1124.3" y2="513.4" stroke="#555" stroke-width="0.9"/><line x1="908.6" y1="491.2" x2="1128.3" y2="510.7" stroke="#555" stroke-width="0.9"/><line x1="912.5" y1="488.5" x2="1132.3" y2="508.0" stroke="#555" stroke-width="0.9"/><line x1="916.4" y1="485.8" x2="1136.3" y2="505.3" stroke="#555" stroke-width="0.9"/><line x1="920.3" y1="483.0" x2="1140.3" y2="502.6" stroke="#555" stroke-width="0.9"/><line x1="924.1" y1="480.2" x2="1144.3" y2="499.9" stroke="#555" stroke-width="0.9"/><line x1="928.0" y1="477.5" x2="1148.3" y2="497.1" stroke="#555" stroke-width="0.9"/><line x1="931.9" y1="474.8" x2="1152.3" y2="494.4" stroke="#555" stroke-width="0.9"/><line x1="935.7" y1="472.0" x2="1156.3" y2="491.7" stroke="#555" stroke-width="0.9"/><line x1="939.6" y1="469.2" x2="1160.3" y2="489.0" stroke="#555" stroke-width="0.9"/><line x1="943.5" y1="466.5" x2="1164.3" y2="486.3" stroke="#555" stroke-width="0.9"/><line x1="947.4" y1="463.8" x2="1168.3" y2="483.6" stroke="#555" stroke-width="0.9"/><line x1="951.2" y1="461.0" x2="1172.3" y2="480.9" stroke="#555" stroke-width="0.9"/><line x1="955.1" y1="458.2" x2="1176.3" y2="478.1" stroke="#555" stroke-width="0.9"/><line x1="959.0" y1="455.5" x2="1180.3" y2="475.4" stroke="#555" stroke-width="0.9"/><line x1="962.8" y1="452.8" x2="1184.3" y2="472.7" stroke="#555" stroke-width="0.9"/><line x1="966.7" y1="450.0" x2="1188.3" y2="470.0" stroke="#555" stroke-width="0.9"/><line x1="889.3" y1="505.0" x2="966.7" y2="450.0" stroke="#222" stroke-width="0.8"/><line x1="911.2" y1="506.9" x2="988.9" y2="452.0" stroke="#222" stroke-width="0.8"/><line x1="933.1" y1="508.9" x2="1011.0" y2="454.0" stroke="#222" stroke-width="0.8"/><line x1="955.0" y1="510.8" x2="1033.2" y2="456.0" stroke="#222" stroke-width="0.8"/><line x1="976.9" y1="512.7" x2="1055.3" y2="458.0" stroke="#222" stroke-width="0.8"/><line x1="998.8" y1="514.6" x2="1077.5" y2="460.0" stroke="#222" stroke-width="0.8"/><line x1="1020.7" y1="516.6" x2="1099.7" y2="462.0" stroke="#222" stroke-width="0.8"/><line x1="1042.6" y1="518.5" x2="1121.8" y2="464.0" stroke="#222" stroke-width="0.8"/><line x1="1064.5" y1="520.4" x2="1144.0" y2="466.0" stroke="#222" stroke-width="0.8"/><line x1="1086.4" y1="522.4" x2="1166.1" y2="468.0" stroke="#222" stroke-width="0.8"/><line x1="1108.3" y1="524.3" x2="1188.3" y2="470.0" stroke="#222" stroke-width="0.8"/><line x1="889.3" y1="505.0" x2="1108.3" y2="524.3" stroke="#2030e0" stroke-width="1.5"/><line x1="1108.3" y1="524.3" x2="1188.3" y2="470.0" stroke="#e03030" stroke-width="1.5"/><polygon points="890,625 968.3,570.7 1186.7,590 1108.3,645" fill="#7c7c7c"/></svg>
<div style="left:1205px;top:431px;width:1px;height:231px;background:#b8b8b8"></div>
<div style="left:830px;top:661px;width:376px;height:1px;background:#b8b8b8"></div>
<div style="left:64px;top:670px;width:1149px;height:1px;background:#707070"></div>
<div style="left:64px;top:671px;width:1149px;height:1px;background:#fff"></div>
<div style="left:64px;top:674px;width:1149px;height:1px;background:#b8b8b8"></div>
<div style="left:64px;top:676px;width:115px;height:12px;background:#0a7f0a"></div>
<div style="left:67.00px;top:676.00px;font-size:10px;line-height:14.0px;color:#c8f0c8;font-weight:bold;transform:scaleX(0.9475);transform-origin:left center;white-space:pre;">M800 Connected V3.54E</div>
<div style="left:183px;top:676px;width:101px;height:12px;background:#e81818"></div>
<div style="left:191.00px;top:676.00px;font-size:10px;line-height:14.0px;color:#ffe0e0;font-weight:bold;transform:scaleX(0.8998);transform-origin:left center;white-space:pre;">Diagnostic Errors: 3</div>
<div style="left:286px;top:675px;width:1px;height:13px;background:#b0b0b0"></div>
<div style="left:291.00px;top:676.00px;font-size:10px;line-height:14.0px;color:#222;transform:scaleX(0.9347);transform-origin:left center;white-space:pre;">Arrow Keys-Select  PgUp/PgDn-Adjust  Enter-Set Value</div>
<div style="left:64px;top:688px;width:1149px;height:32px;background:#0c0f17"></div>
<div style="left:64px;top:688px;width:38px;height:32px;background:#090b10"></div>
<svg style="left:76px;top:697px" width="14" height="14" viewBox="0 0 14 14"><path d="M0 2L6 1.1V6.6H0ZM7 1L14 0V6.6H7ZM0 7.4H6V12.9L0 12ZM7 7.4H14V14L7 13Z" fill="#fff"/></svg>
<div style="left:102px;top:688px;width:276px;height:32px;background:#f2f2f2"></div>
<svg style="left:110px;top:696px" width="17" height="17" viewBox="0 0 17 17"><circle cx="8.5" cy="8.5" r="7.3" fill="none" stroke="#111" stroke-width="1.8"/></svg>
<div style="left:135.00px;top:697.10px;font-size:12px;line-height:16.799999999999997px;color:#5a5a5a;transform:scaleX(0.9240);transform-origin:left center;white-space:pre;">Type here to search</div>
<svg style="left:355px;top:696px" width="12" height="16" viewBox="0 0 12 16"><rect x="3.5" y="0.8" width="5" height="9" rx="2.5" fill="none" stroke="#777" stroke-width="1.3"/><path d="M1.5 7.5Q1.5 12 6 12Q10.5 12 10.5 7.5M6 12V15" fill="none" stroke="#777" stroke-width="1.3"/></svg>
<svg style="left:389px;top:697px" width="16" height="14" viewBox="0 0 16 14"><rect x="1" y="2.5" width="9" height="9" fill="none" stroke="#ddd" stroke-width="1.4"/><path d="M0 1H11M0 13H11M13 2V5M13 7V12" stroke="#ddd" stroke-width="1.4"/></svg>
<svg style="left:428px;top:694px" width="19" height="19" viewBox="0 0 19 19"><path d="M3 11C3 5 7 2 11 2C15 2 17.5 5 17.5 9.5H7C7 13 10 15 13 15C15 15 16.5 14 17 13.5V17C15.5 18 13.5 18.5 11.5 18.5C6 18.5 2 15.5 2.5 10C3.5 7 6 5.5 8 5.2C6.5 6.5 6.5 7.5 6.8 7.8H13C13 5.5 11.5 4.8 10.5 4.8" fill="#1f7ae0"/></svg>
<div style="left:422px;top:718px;width:32px;height:2px;background:#76b9ed"></div>
<svg style="left:467px;top:696px" width="19" height="16" viewBox="0 0 19 16"><path d="M0 1H7L9 3H19V16H0Z" fill="#f0c84a"/><rect x="0" y="5" width="19" height="11" fill="#f6d86a"/><rect x="5" y="9" width="9" height="3" fill="#2a8ad8"/><rect x="8" y="11" width="3" height="5" fill="#2a8ad8"/></svg>
<div style="left:497px;top:688px;width:38px;height:32px;background:#2a2e36"></div>
<div style="left:497px;top:718px;width:38px;height:2px;background:#76b9ed"></div>
<svg style="left:507px;top:693px" width="19" height="20" viewBox="0 0 19 20"><g fill="#ddd"><path d="M4 0V8M0 4H8M15 0V8M11 4H19" stroke="#ddd" stroke-width="1.6"/></g><rect x="2" y="11" width="15" height="8" fill="#e8c050" stroke="#caa040"/><rect x="4" y="13.5" width="11" height="3" fill="#c02020"/></svg>
<svg style="left:1016px;top:696px" width="16" height="16" viewBox="0 0 16 16"><g fill="none" stroke="#ddd" stroke-width="1.2"><circle cx="10" cy="4" r="2.5"/><path d="M6 10Q6 7 10 7Q14 7 14 10"/><circle cx="5" cy="8" r="2.5"/><path d="M1 15Q1 11 5 11Q9 11 9 15"/></g></svg>
<svg style="left:1046px;top:699px" width="12" height="8" viewBox="0 0 12 8"><path d="M1 7L6 2L11 7" fill="none" stroke="#ddd" stroke-width="1.3"/></svg>
<svg style="left:1063px;top:697px" width="17" height="14" viewBox="0 0 17 14"><path d="M1 2V8M3 2V5" stroke="#ddd" stroke-width="1.2"/><rect x="4" y="5" width="12" height="7" fill="#ddd"/><rect x="6" y="7" width="8" height="3" fill="#888"/></svg>
<svg style="left:1083px;top:697px" width="17" height="15" viewBox="0 0 17 15"><rect x="5" y="1" width="11" height="9" fill="none" stroke="#ddd" stroke-width="1.3"/><path d="M10 10V13M7 13.5H13M1 3H4V9M1 9H4" fill="none" stroke="#ddd" stroke-width="1.2"/></svg>
<svg style="left:1102px;top:697px" width="17" height="15" viewBox="0 0 17 15"><path d="M1 5H4L8 1.5V13.5L4 10H1Z" fill="none" stroke="#ddd" stroke-width="1.2"/><path d="M10.5 5Q12 7.5 10.5 10M12.8 3Q15.5 7.5 12.8 12M15 1.5Q18.5 7.5 15 13.5" fill="none" stroke="#ddd" stroke-width="1.1"/></svg>
<div style="left:1125.52px;top:689.70px;font-size:11px;line-height:15.399999999999999px;color:#fff;transform:scaleX(0.8300);transform-origin:center center;white-space:pre;">5:01 PM</div>
<div style="left:1119.47px;top:703.90px;font-size:11px;line-height:15.399999999999999px;color:#fff;transform:scaleX(0.8719);transform-origin:center center;white-space:pre;">10/22/2018</div>
<svg style="left:1181px;top:696px" width="16" height="16" viewBox="0 0 16 16"><path d="M1 1H15V12H9L7 15L5.5 12H1Z" fill="#fff"/><path d="M4 4.5H12M4 7H12M4 9.5H9" stroke="#0c0f17" stroke-width="1"/></svg>
<svg style="left:0;top:0" width="1280" height="60" viewBox="0 0 1280 60"><path d="M70.5 49.5L72 43.5H80L83 45L81 49.5Z M70.5 49.5V42H74L75 43" fill="none" stroke="#b0b0b0" stroke-width="1"/><path d="M78 42L81 40.5L82 42" fill="none" stroke="#b8b8b8" stroke-width="1"/><path d="M90 43.5H97V50.5H90Z" fill="none" stroke="#b8b8b8" stroke-width="1.1"/><path d="M96 43.5V40.5H101V50.5H97" fill="none" stroke="#c0c0c0" stroke-width="1"/><path d="M109.5 44H113L114 43H118V51H109.5Z" fill="#7a7a10" stroke="#3a3a00" stroke-width="0.8"/><circle cx="119" cy="41" r="1" fill="#111"/><line x1="127.5" y1="38" x2="127.5" y2="53" stroke="#b0b0b0" stroke-width="1"/><line x1="172.5" y1="38" x2="172.5" y2="53" stroke="#b0b0b0" stroke-width="1"/><line x1="236.5" y1="38" x2="236.5" y2="53" stroke="#b0b0b0" stroke-width="1"/><line x1="338.5" y1="38" x2="338.5" y2="53" stroke="#b0b0b0" stroke-width="1"/><line x1="402.5" y1="38" x2="402.5" y2="53" stroke="#b0b0b0" stroke-width="1"/><rect x="135" y="40" width="11" height="11" fill="#3a4a10"/><rect x="137" y="41" width="7" height="5" fill="#d8d8d0"/><rect x="137" y="48" width="7" height="3" fill="#000"/><path d="M156 40.5H162L165 43.5V50.5H156Z" fill="#f4f4e8" stroke="#444" stroke-width="0.9"/><path d="M154.5 39.5L160 46" stroke="#2a6a2a" stroke-width="1.4"/><rect x="179.5" y="40.5" width="12" height="10" fill="#fff" stroke="#444" stroke-width="1"/><path d="M181 43H190M181 45.5H190M181 48H190" stroke="#777" stroke-width="1.2" stroke-dasharray="2 1"/><rect x="198.5" y="40.5" width="12" height="10" fill="#fff" stroke="#444" stroke-width="1"/><path d="M201 46Q204.5 41.5 208.5 45M203.5 43.5L205 48" fill="none" stroke="#c04040" stroke-width="1"/><rect x="217.5" y="40.5" width="13" height="10" fill="#fff" stroke="#444" stroke-width="1"/><circle cx="224" cy="45.5" r="4" fill="#b01010"/><rect x="223.3" y="42.5" width="1.4" height="5" fill="#fff"/><path d="M243.5 51L248.5 46" stroke="#60b060" stroke-width="2.6"/><path d="M248 46.5L253 41.5" stroke="#333" stroke-width="3.2"/><path d="M252.5 42L255.5 39.5" stroke="#888" stroke-width="2.4"/><path d="M275 40L266 45H270L262.5 51L272 46H268Z" fill="#e8e820" stroke="#808010" stroke-width="0.7"/><path d="M281.5 51L286 46.5" stroke="#60b060" stroke-width="2.4"/><path d="M285.5 47L290 42.5" stroke="#333" stroke-width="3"/><circle cx="291.5" cy="48" r="3" fill="#fff" stroke="#333" stroke-width="0.9"/><path d="M291.5 46.5V48H293" stroke="#333" stroke-width="0.7" fill="none"/><circle cx="306.8" cy="45.8" r="5.6" fill="none" stroke="#444" stroke-width="1.2"/><circle cx="306.8" cy="45.8" r="3.2" fill="none" stroke="#555" stroke-width="1"/><circle cx="306.8" cy="45.8" r="1" fill="#222"/><path d="M307 40.2H312.5V43" fill="none" stroke="#444" stroke-width="1.1"/><rect x="320.5" y="40" width="12" height="11" fill="#fff" stroke="#222" stroke-width="1"/><rect x="320" y="39.3" width="13" height="1.8" fill="#1a4a1a"/><text x="326.5" y="49.2" font-family="Liberation Sans" font-size="7" text-anchor="middle" fill="#222">LA</text><path d="M347 42.5L356 50.5" stroke="#707070" stroke-width="2.2"/><path d="M345.5 43.5A2.8 2.8 0 0 1 349.5 39.8" fill="none" stroke="#707070" stroke-width="2"/><path d="M365.5 40.5H376.5M365.5 50.5H376.5" stroke="#333" stroke-width="1"/><path d="M367.5 49L374.5 42" stroke="#4a8a2a" stroke-width="1.3"/><path d="M384 41.3H393" stroke="#c81010" stroke-width="1.8"/><path d="M392 38.9L396.5 41.3L392 43.699999999999996Z" fill="#c81010"/><path d="M384 45.3H393" stroke="#c81010" stroke-width="1.8"/><path d="M392 42.9L396.5 45.3L392 47.699999999999996Z" fill="#c81010"/><path d="M384 49.4H393" stroke="#c81010" stroke-width="1.8"/><path d="M392 47.0L396.5 49.4L392 51.8Z" fill="#c81010"/><circle cx="416" cy="45.3" r="6" fill="#1a2aa8" stroke="#c0c8f0" stroke-width="0.8"/><text x="416" y="49" font-family="Liberation Sans" font-weight="bold" font-size="9.5" text-anchor="middle" fill="#fff">?</text></svg>
<svg style="left:1146px;top:34px" width="70" height="23" viewBox="0 0 70 23">
<rect x="0.5" y="0.5" width="69" height="22" rx="3" fill="#fff" stroke="#9a9a9a"/>
<rect x="2" y="2" width="66" height="19" rx="2.5" fill="#e00000"/>
<text x="35" y="18" font-family="Liberation Sans" font-weight="bold" font-style="italic" font-size="17.5" text-anchor="middle" fill="#fff" stroke="#fff" stroke-width="0.5" textLength="57" lengthAdjust="spacingAndGlyphs">MoTeC</text></svg>
<svg style="left:420px;top:265px" width="24" height="30" viewBox="420 265 24 30"><path d="M428 271.5L428 287L431.6 283.6L434 289L436 288.1L433.8 282.9L438.5 282.9Z" fill="#fff" fill-opacity="0.85" stroke="#666" stroke-width="0.9"/></svg>
</body></html>
